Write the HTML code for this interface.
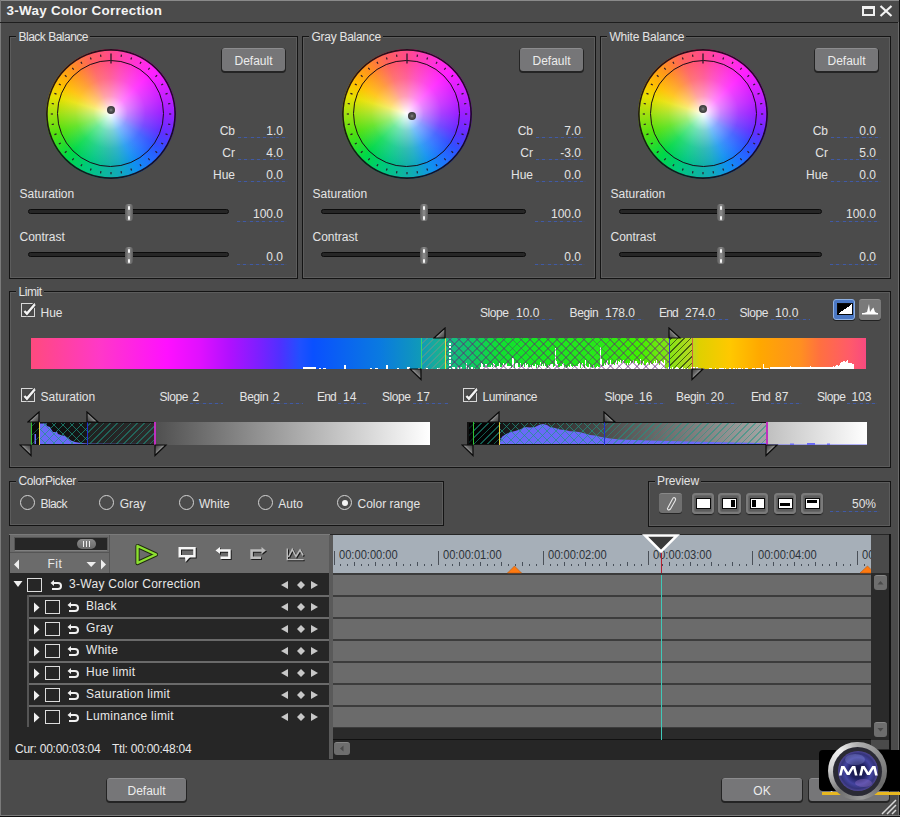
<!DOCTYPE html><html><head><meta charset="utf-8"><style>html,body{margin:0;padding:0;}body{width:900px;height:817px;position:relative;overflow:hidden;background:#4b4b4b;font-family:'Liberation Sans', sans-serif;}</style></head><body>
<div style="position:absolute;left:0px;top:0px;width:900px;height:1px;background:#8a8a8a;"></div>
<div style="position:absolute;left:0px;top:0px;width:1px;height:817px;background:#7a7a7a;"></div>
<div style="position:absolute;left:899px;top:0px;width:1px;height:817px;background:#111;"></div>
<div style="position:absolute;left:898px;top:22px;width:1px;height:793px;background:#6a6a6a;"></div>
<div style="position:absolute;left:0px;top:815px;width:900px;height:1px;background:#7a7a7a;"></div>
<div style="position:absolute;left:0px;top:816px;width:900px;height:1px;background:#111;"></div>
<div style="position:absolute;left:0px;top:22px;width:898px;height:1px;background:#1e1e1e;"></div>
<div style="position:absolute;left:6.5px;top:3.16px;height:13.4px;line-height:13.4px;font:bold 13.4px 'Liberation Sans', sans-serif;color:#f4f4f4;white-space:nowrap;letter-spacing:0.3px;">3-Way Color Correction</div>
<div style="position:absolute;left:862px;top:6px;width:13px;height:10px;box-sizing:border-box;border:2px solid #f0f0f0;border-top-width:3px;"></div>
<svg style="position:absolute;left:879px;top:5px" width="14" height="12"><path d="M1.5 1 L12.5 11 M12.5 1 L1.5 11" stroke="#f4f4f4" stroke-width="2.2"/></svg>
<div style="position:absolute;left:9px;top:36px;width:289px;height:243px;box-sizing:border-box;border:1px solid #141414;"></div>
<div style="position:absolute;left:10px;top:37px;width:287px;height:241px;box-sizing:border-box;border:1px solid #5c5c5c;"></div>
<div style="position:absolute;left:16px;top:30px;width:4px;height:10px;background:#4b4b4b;"></div>
<div style="position:absolute;left:18.5px;top:29.84px;height:12px;line-height:12px;font:normal 12px 'Liberation Sans', sans-serif;color:#e4e4e4;white-space:nowrap;background:#4b4b4b;padding:0 2px 0 1px;margin-left:-1px;letter-spacing:-0.5px;">Black Balance</div>
<div style="position:absolute;left:45.900000000000006px;top:48.5px;width:130px;height:130px;border-radius:50%;background:conic-gradient(#ff4a8a 0deg,#ff40b0 12deg,#ff30e0 30deg,#ff20ff 45deg,#e020ff 60deg,#c020ff 75deg,#9a20ff 90deg,#6030ff 110deg,#3050ff 125deg,#2070ff 140deg,#1090f0 155deg,#10a8c0 170deg,#10b0a8 180deg,#00c880 202deg,#00d848 225deg,#50e010 250deg,#a0e010 270deg,#e8e000 287deg,#ffc000 300deg,#ff9020 320deg,#ff6060 340deg,#ff4a8a 360deg);box-shadow:0 0 0 1.7px rgba(20,5,20,0.9) inset;"></div>
<div style="position:absolute;left:57.400000000000006px;top:60.0px;width:107.0px;height:107.0px;border-radius:50%;box-sizing:border-box;border:1.8px solid #1a0c18;background:radial-gradient(circle closest-side,#fff 0%,rgba(255,255,255,0.85) 9%,rgba(255,255,255,0.45) 33%,rgba(255,255,255,0.14) 67%,rgba(255,255,255,0) 100%),conic-gradient(#ff4a8a 0deg,#ff40b0 12deg,#ff30e0 30deg,#ff20ff 45deg,#e020ff 60deg,#c020ff 75deg,#9a20ff 90deg,#6030ff 110deg,#3050ff 125deg,#2070ff 140deg,#1090f0 155deg,#10a8c0 170deg,#10b0a8 180deg,#00c880 202deg,#00d848 225deg,#50e010 250deg,#a0e010 270deg,#e8e000 287deg,#ffc000 300deg,#ff9020 320deg,#ff6060 340deg,#ff4a8a 360deg);"></div>
<svg style="position:absolute;left:45.900000000000006px;top:48.5px" width="130" height="130"><line x1="65.00" y1="14.50" x2="65.00" y2="4.50" stroke="#2a1a2a" stroke-width="1.3"/><line x1="75.07" y1="7.88" x2="75.45" y2="5.71" stroke="#2a1a2a" stroke-width="1.15"/><line x1="84.84" y1="10.50" x2="85.59" y2="8.43" stroke="#2a1a2a" stroke-width="1.15"/><line x1="94.00" y1="14.77" x2="95.10" y2="12.87" stroke="#2a1a2a" stroke-width="1.15"/><line x1="102.28" y1="20.57" x2="103.70" y2="18.88" stroke="#2a1a2a" stroke-width="1.15"/><line x1="109.43" y1="27.72" x2="111.12" y2="26.30" stroke="#2a1a2a" stroke-width="1.15"/><line x1="115.23" y1="36.00" x2="117.13" y2="34.90" stroke="#2a1a2a" stroke-width="1.15"/><line x1="119.50" y1="45.16" x2="121.57" y2="44.41" stroke="#2a1a2a" stroke-width="1.15"/><line x1="122.12" y1="54.93" x2="124.29" y2="54.55" stroke="#2a1a2a" stroke-width="1.15"/><line x1="123.00" y1="65.00" x2="125.20" y2="65.00" stroke="#2a1a2a" stroke-width="1.15"/><line x1="122.12" y1="75.07" x2="124.29" y2="75.45" stroke="#2a1a2a" stroke-width="1.15"/><line x1="119.50" y1="84.84" x2="121.57" y2="85.59" stroke="#2a1a2a" stroke-width="1.15"/><line x1="115.23" y1="94.00" x2="117.13" y2="95.10" stroke="#2a1a2a" stroke-width="1.15"/><line x1="109.43" y1="102.28" x2="111.12" y2="103.70" stroke="#2a1a2a" stroke-width="1.15"/><line x1="102.28" y1="109.43" x2="103.70" y2="111.12" stroke="#2a1a2a" stroke-width="1.15"/><line x1="94.00" y1="115.23" x2="95.10" y2="117.13" stroke="#2a1a2a" stroke-width="1.15"/><line x1="84.84" y1="119.50" x2="85.59" y2="121.57" stroke="#2a1a2a" stroke-width="1.15"/><line x1="75.07" y1="122.12" x2="75.45" y2="124.29" stroke="#2a1a2a" stroke-width="1.15"/><line x1="65.00" y1="123.00" x2="65.00" y2="125.20" stroke="#2a1a2a" stroke-width="1.15"/><line x1="54.93" y1="122.12" x2="54.55" y2="124.29" stroke="#2a1a2a" stroke-width="1.15"/><line x1="45.16" y1="119.50" x2="44.41" y2="121.57" stroke="#2a1a2a" stroke-width="1.15"/><line x1="36.00" y1="115.23" x2="34.90" y2="117.13" stroke="#2a1a2a" stroke-width="1.15"/><line x1="27.72" y1="109.43" x2="26.30" y2="111.12" stroke="#2a1a2a" stroke-width="1.15"/><line x1="20.57" y1="102.28" x2="18.88" y2="103.70" stroke="#2a1a2a" stroke-width="1.15"/><line x1="14.77" y1="94.00" x2="12.87" y2="95.10" stroke="#2a1a2a" stroke-width="1.15"/><line x1="10.50" y1="84.84" x2="8.43" y2="85.59" stroke="#2a1a2a" stroke-width="1.15"/><line x1="7.88" y1="75.07" x2="5.71" y2="75.45" stroke="#2a1a2a" stroke-width="1.15"/><line x1="7.00" y1="65.00" x2="4.80" y2="65.00" stroke="#2a1a2a" stroke-width="1.15"/><line x1="7.88" y1="54.93" x2="5.71" y2="54.55" stroke="#2a1a2a" stroke-width="1.15"/><line x1="10.50" y1="45.16" x2="8.43" y2="44.41" stroke="#2a1a2a" stroke-width="1.15"/><line x1="14.77" y1="36.00" x2="12.87" y2="34.90" stroke="#2a1a2a" stroke-width="1.15"/><line x1="20.57" y1="27.72" x2="18.88" y2="26.30" stroke="#2a1a2a" stroke-width="1.15"/><line x1="27.72" y1="20.57" x2="26.30" y2="18.88" stroke="#2a1a2a" stroke-width="1.15"/><line x1="36.00" y1="14.77" x2="34.90" y2="12.87" stroke="#2a1a2a" stroke-width="1.15"/><line x1="45.16" y1="10.50" x2="44.41" y2="8.43" stroke="#2a1a2a" stroke-width="1.15"/><line x1="54.93" y1="7.88" x2="54.55" y2="5.71" stroke="#2a1a2a" stroke-width="1.15"/></svg>
<div style="position:absolute;left:107px;top:106.4px;width:8px;height:8px;border-radius:50%;background:radial-gradient(circle at 50% 50%,#888 0,#555 30%,#3a3a3a 70%,#333 100%);"></div>
<div style="position:absolute;left:222px;top:48px;width:63px;height:23px;box-sizing:border-box;border-radius:3px;background:#767678;border-top:1px solid #8c8c8e;box-shadow:0 1px 0 1px #242424;"></div>
<div style="position:absolute;left:222px;top:53.84px;width:63px;height:12px;line-height:12px;font:12px 'Liberation Sans', sans-serif;color:#ececec;text-align:center;white-space:nowrap;">Default</div>
<div style="position:absolute;left:35px;width:200px;text-align:right;top:123.84px;height:12px;line-height:12px;font:12px 'Liberation Sans', sans-serif;color:#e4e4e4;white-space:nowrap;">Cb</div>
<div style="position:absolute;left:83px;width:200px;text-align:right;top:123.84px;height:12px;line-height:12px;font:12px 'Liberation Sans', sans-serif;color:#e4e4e4;white-space:nowrap;">1.0</div>
<div style="position:absolute;left:238px;top:137px;width:50px;height:1px;background:repeating-linear-gradient(90deg,rgba(60,95,195,0.75) 0 3px,rgba(60,95,195,0.12) 3px 6.3px);"></div>
<div style="position:absolute;left:35px;width:200px;text-align:right;top:145.84px;height:12px;line-height:12px;font:12px 'Liberation Sans', sans-serif;color:#e4e4e4;white-space:nowrap;">Cr</div>
<div style="position:absolute;left:83px;width:200px;text-align:right;top:145.84px;height:12px;line-height:12px;font:12px 'Liberation Sans', sans-serif;color:#e4e4e4;white-space:nowrap;">4.0</div>
<div style="position:absolute;left:238px;top:159px;width:50px;height:1px;background:repeating-linear-gradient(90deg,rgba(60,95,195,0.75) 0 3px,rgba(60,95,195,0.12) 3px 6.3px);"></div>
<div style="position:absolute;left:35px;width:200px;text-align:right;top:167.84px;height:12px;line-height:12px;font:12px 'Liberation Sans', sans-serif;color:#e4e4e4;white-space:nowrap;">Hue</div>
<div style="position:absolute;left:83px;width:200px;text-align:right;top:167.84px;height:12px;line-height:12px;font:12px 'Liberation Sans', sans-serif;color:#e4e4e4;white-space:nowrap;">0.0</div>
<div style="position:absolute;left:238px;top:181px;width:50px;height:1px;background:repeating-linear-gradient(90deg,rgba(60,95,195,0.75) 0 3px,rgba(60,95,195,0.12) 3px 6.3px);"></div>
<div style="position:absolute;left:19.5px;top:186.84px;height:12px;line-height:12px;font:normal 12px 'Liberation Sans', sans-serif;color:#e4e4e4;white-space:nowrap;">Saturation</div>
<div style="position:absolute;left:27.5px;top:209.3px;width:201.0px;height:4.8px;box-sizing:border-box;border-radius:2.4px;background:#262626;border:1.3px solid #0c0c0c;"></div>
<div style="position:absolute;left:125px;top:204px;width:7.6px;height:16.5px;border-radius:3px 3px 3.5px 3.5px;background:linear-gradient(90deg,#5a5a5a,#8c8c8c 50%,#5a5a5a);"></div>
<div style="position:absolute;left:128.2px;top:206px;width:1.4px;height:4px;background:#f4f4f4;border-radius:1px;"></div>
<div style="position:absolute;left:128.2px;top:216px;width:1.4px;height:4px;background:#f4f4f4;border-radius:1px;"></div>
<div style="position:absolute;left:83px;width:200px;text-align:right;top:206.84px;height:12px;line-height:12px;font:12px 'Liberation Sans', sans-serif;color:#e4e4e4;white-space:nowrap;">100.0</div>
<div style="position:absolute;left:237px;top:221px;width:50px;height:1px;background:repeating-linear-gradient(90deg,rgba(60,95,195,0.75) 0 3px,rgba(60,95,195,0.12) 3px 6.3px);"></div>
<div style="position:absolute;left:19.5px;top:229.84px;height:12px;line-height:12px;font:normal 12px 'Liberation Sans', sans-serif;color:#e4e4e4;white-space:nowrap;">Contrast</div>
<div style="position:absolute;left:27.5px;top:252.3px;width:201.0px;height:4.8px;box-sizing:border-box;border-radius:2.4px;background:#262626;border:1.3px solid #0c0c0c;"></div>
<div style="position:absolute;left:125px;top:247px;width:7.6px;height:16.5px;border-radius:3px 3px 3.5px 3.5px;background:linear-gradient(90deg,#5a5a5a,#8c8c8c 50%,#5a5a5a);"></div>
<div style="position:absolute;left:128.2px;top:249px;width:1.4px;height:4px;background:#f4f4f4;border-radius:1px;"></div>
<div style="position:absolute;left:128.2px;top:259px;width:1.4px;height:4px;background:#f4f4f4;border-radius:1px;"></div>
<div style="position:absolute;left:83px;width:200px;text-align:right;top:249.84px;height:12px;line-height:12px;font:12px 'Liberation Sans', sans-serif;color:#e4e4e4;white-space:nowrap;">0.0</div>
<div style="position:absolute;left:237px;top:264px;width:50px;height:1px;background:repeating-linear-gradient(90deg,rgba(60,95,195,0.75) 0 3px,rgba(60,95,195,0.12) 3px 6.3px);"></div>
<div style="position:absolute;left:302px;top:36px;width:294px;height:243px;box-sizing:border-box;border:1px solid #141414;"></div>
<div style="position:absolute;left:303px;top:37px;width:292px;height:241px;box-sizing:border-box;border:1px solid #5c5c5c;"></div>
<div style="position:absolute;left:309px;top:30px;width:4px;height:10px;background:#4b4b4b;"></div>
<div style="position:absolute;left:311.5px;top:29.84px;height:12px;line-height:12px;font:normal 12px 'Liberation Sans', sans-serif;color:#e4e4e4;white-space:nowrap;background:#4b4b4b;padding:0 2px 0 1px;margin-left:-1px;letter-spacing:-0.28px;">Gray Balance</div>
<div style="position:absolute;left:341.6px;top:48.5px;width:130px;height:130px;border-radius:50%;background:conic-gradient(#ff4a8a 0deg,#ff40b0 12deg,#ff30e0 30deg,#ff20ff 45deg,#e020ff 60deg,#c020ff 75deg,#9a20ff 90deg,#6030ff 110deg,#3050ff 125deg,#2070ff 140deg,#1090f0 155deg,#10a8c0 170deg,#10b0a8 180deg,#00c880 202deg,#00d848 225deg,#50e010 250deg,#a0e010 270deg,#e8e000 287deg,#ffc000 300deg,#ff9020 320deg,#ff6060 340deg,#ff4a8a 360deg);box-shadow:0 0 0 1.7px rgba(20,5,20,0.9) inset;"></div>
<div style="position:absolute;left:353.1px;top:60.0px;width:107.0px;height:107.0px;border-radius:50%;box-sizing:border-box;border:1.8px solid #1a0c18;background:radial-gradient(circle closest-side,#fff 0%,rgba(255,255,255,0.85) 9%,rgba(255,255,255,0.45) 33%,rgba(255,255,255,0.14) 67%,rgba(255,255,255,0) 100%),conic-gradient(#ff4a8a 0deg,#ff40b0 12deg,#ff30e0 30deg,#ff20ff 45deg,#e020ff 60deg,#c020ff 75deg,#9a20ff 90deg,#6030ff 110deg,#3050ff 125deg,#2070ff 140deg,#1090f0 155deg,#10a8c0 170deg,#10b0a8 180deg,#00c880 202deg,#00d848 225deg,#50e010 250deg,#a0e010 270deg,#e8e000 287deg,#ffc000 300deg,#ff9020 320deg,#ff6060 340deg,#ff4a8a 360deg);"></div>
<svg style="position:absolute;left:341.6px;top:48.5px" width="130" height="130"><line x1="65.00" y1="14.50" x2="65.00" y2="4.50" stroke="#2a1a2a" stroke-width="1.3"/><line x1="75.07" y1="7.88" x2="75.45" y2="5.71" stroke="#2a1a2a" stroke-width="1.15"/><line x1="84.84" y1="10.50" x2="85.59" y2="8.43" stroke="#2a1a2a" stroke-width="1.15"/><line x1="94.00" y1="14.77" x2="95.10" y2="12.87" stroke="#2a1a2a" stroke-width="1.15"/><line x1="102.28" y1="20.57" x2="103.70" y2="18.88" stroke="#2a1a2a" stroke-width="1.15"/><line x1="109.43" y1="27.72" x2="111.12" y2="26.30" stroke="#2a1a2a" stroke-width="1.15"/><line x1="115.23" y1="36.00" x2="117.13" y2="34.90" stroke="#2a1a2a" stroke-width="1.15"/><line x1="119.50" y1="45.16" x2="121.57" y2="44.41" stroke="#2a1a2a" stroke-width="1.15"/><line x1="122.12" y1="54.93" x2="124.29" y2="54.55" stroke="#2a1a2a" stroke-width="1.15"/><line x1="123.00" y1="65.00" x2="125.20" y2="65.00" stroke="#2a1a2a" stroke-width="1.15"/><line x1="122.12" y1="75.07" x2="124.29" y2="75.45" stroke="#2a1a2a" stroke-width="1.15"/><line x1="119.50" y1="84.84" x2="121.57" y2="85.59" stroke="#2a1a2a" stroke-width="1.15"/><line x1="115.23" y1="94.00" x2="117.13" y2="95.10" stroke="#2a1a2a" stroke-width="1.15"/><line x1="109.43" y1="102.28" x2="111.12" y2="103.70" stroke="#2a1a2a" stroke-width="1.15"/><line x1="102.28" y1="109.43" x2="103.70" y2="111.12" stroke="#2a1a2a" stroke-width="1.15"/><line x1="94.00" y1="115.23" x2="95.10" y2="117.13" stroke="#2a1a2a" stroke-width="1.15"/><line x1="84.84" y1="119.50" x2="85.59" y2="121.57" stroke="#2a1a2a" stroke-width="1.15"/><line x1="75.07" y1="122.12" x2="75.45" y2="124.29" stroke="#2a1a2a" stroke-width="1.15"/><line x1="65.00" y1="123.00" x2="65.00" y2="125.20" stroke="#2a1a2a" stroke-width="1.15"/><line x1="54.93" y1="122.12" x2="54.55" y2="124.29" stroke="#2a1a2a" stroke-width="1.15"/><line x1="45.16" y1="119.50" x2="44.41" y2="121.57" stroke="#2a1a2a" stroke-width="1.15"/><line x1="36.00" y1="115.23" x2="34.90" y2="117.13" stroke="#2a1a2a" stroke-width="1.15"/><line x1="27.72" y1="109.43" x2="26.30" y2="111.12" stroke="#2a1a2a" stroke-width="1.15"/><line x1="20.57" y1="102.28" x2="18.88" y2="103.70" stroke="#2a1a2a" stroke-width="1.15"/><line x1="14.77" y1="94.00" x2="12.87" y2="95.10" stroke="#2a1a2a" stroke-width="1.15"/><line x1="10.50" y1="84.84" x2="8.43" y2="85.59" stroke="#2a1a2a" stroke-width="1.15"/><line x1="7.88" y1="75.07" x2="5.71" y2="75.45" stroke="#2a1a2a" stroke-width="1.15"/><line x1="7.00" y1="65.00" x2="4.80" y2="65.00" stroke="#2a1a2a" stroke-width="1.15"/><line x1="7.88" y1="54.93" x2="5.71" y2="54.55" stroke="#2a1a2a" stroke-width="1.15"/><line x1="10.50" y1="45.16" x2="8.43" y2="44.41" stroke="#2a1a2a" stroke-width="1.15"/><line x1="14.77" y1="36.00" x2="12.87" y2="34.90" stroke="#2a1a2a" stroke-width="1.15"/><line x1="20.57" y1="27.72" x2="18.88" y2="26.30" stroke="#2a1a2a" stroke-width="1.15"/><line x1="27.72" y1="20.57" x2="26.30" y2="18.88" stroke="#2a1a2a" stroke-width="1.15"/><line x1="36.00" y1="14.77" x2="34.90" y2="12.87" stroke="#2a1a2a" stroke-width="1.15"/><line x1="45.16" y1="10.50" x2="44.41" y2="8.43" stroke="#2a1a2a" stroke-width="1.15"/><line x1="54.93" y1="7.88" x2="54.55" y2="5.71" stroke="#2a1a2a" stroke-width="1.15"/></svg>
<div style="position:absolute;left:407.7px;top:112.2px;width:8px;height:8px;border-radius:50%;background:radial-gradient(circle at 50% 50%,#888 0,#555 30%,#3a3a3a 70%,#333 100%);"></div>
<div style="position:absolute;left:520px;top:48px;width:63px;height:23px;box-sizing:border-box;border-radius:3px;background:#767678;border-top:1px solid #8c8c8e;box-shadow:0 1px 0 1px #242424;"></div>
<div style="position:absolute;left:520px;top:53.84px;width:63px;height:12px;line-height:12px;font:12px 'Liberation Sans', sans-serif;color:#ececec;text-align:center;white-space:nowrap;">Default</div>
<div style="position:absolute;left:333px;width:200px;text-align:right;top:123.84px;height:12px;line-height:12px;font:12px 'Liberation Sans', sans-serif;color:#e4e4e4;white-space:nowrap;">Cb</div>
<div style="position:absolute;left:381px;width:200px;text-align:right;top:123.84px;height:12px;line-height:12px;font:12px 'Liberation Sans', sans-serif;color:#e4e4e4;white-space:nowrap;">7.0</div>
<div style="position:absolute;left:536px;top:137px;width:50px;height:1px;background:repeating-linear-gradient(90deg,rgba(60,95,195,0.75) 0 3px,rgba(60,95,195,0.12) 3px 6.3px);"></div>
<div style="position:absolute;left:333px;width:200px;text-align:right;top:145.84px;height:12px;line-height:12px;font:12px 'Liberation Sans', sans-serif;color:#e4e4e4;white-space:nowrap;">Cr</div>
<div style="position:absolute;left:381px;width:200px;text-align:right;top:145.84px;height:12px;line-height:12px;font:12px 'Liberation Sans', sans-serif;color:#e4e4e4;white-space:nowrap;">-3.0</div>
<div style="position:absolute;left:536px;top:159px;width:50px;height:1px;background:repeating-linear-gradient(90deg,rgba(60,95,195,0.75) 0 3px,rgba(60,95,195,0.12) 3px 6.3px);"></div>
<div style="position:absolute;left:333px;width:200px;text-align:right;top:167.84px;height:12px;line-height:12px;font:12px 'Liberation Sans', sans-serif;color:#e4e4e4;white-space:nowrap;">Hue</div>
<div style="position:absolute;left:381px;width:200px;text-align:right;top:167.84px;height:12px;line-height:12px;font:12px 'Liberation Sans', sans-serif;color:#e4e4e4;white-space:nowrap;">0.0</div>
<div style="position:absolute;left:536px;top:181px;width:50px;height:1px;background:repeating-linear-gradient(90deg,rgba(60,95,195,0.75) 0 3px,rgba(60,95,195,0.12) 3px 6.3px);"></div>
<div style="position:absolute;left:312.5px;top:186.84px;height:12px;line-height:12px;font:normal 12px 'Liberation Sans', sans-serif;color:#e4e4e4;white-space:nowrap;">Saturation</div>
<div style="position:absolute;left:321px;top:209.3px;width:205px;height:4.8px;box-sizing:border-box;border-radius:2.4px;background:#262626;border:1.3px solid #0c0c0c;"></div>
<div style="position:absolute;left:420px;top:204px;width:7.6px;height:16.5px;border-radius:3px 3px 3.5px 3.5px;background:linear-gradient(90deg,#5a5a5a,#8c8c8c 50%,#5a5a5a);"></div>
<div style="position:absolute;left:423.2px;top:206px;width:1.4px;height:4px;background:#f4f4f4;border-radius:1px;"></div>
<div style="position:absolute;left:423.2px;top:216px;width:1.4px;height:4px;background:#f4f4f4;border-radius:1px;"></div>
<div style="position:absolute;left:381px;width:200px;text-align:right;top:206.84px;height:12px;line-height:12px;font:12px 'Liberation Sans', sans-serif;color:#e4e4e4;white-space:nowrap;">100.0</div>
<div style="position:absolute;left:535px;top:221px;width:50px;height:1px;background:repeating-linear-gradient(90deg,rgba(60,95,195,0.75) 0 3px,rgba(60,95,195,0.12) 3px 6.3px);"></div>
<div style="position:absolute;left:312.5px;top:229.84px;height:12px;line-height:12px;font:normal 12px 'Liberation Sans', sans-serif;color:#e4e4e4;white-space:nowrap;">Contrast</div>
<div style="position:absolute;left:321px;top:252.3px;width:205px;height:4.8px;box-sizing:border-box;border-radius:2.4px;background:#262626;border:1.3px solid #0c0c0c;"></div>
<div style="position:absolute;left:420px;top:247px;width:7.6px;height:16.5px;border-radius:3px 3px 3.5px 3.5px;background:linear-gradient(90deg,#5a5a5a,#8c8c8c 50%,#5a5a5a);"></div>
<div style="position:absolute;left:423.2px;top:249px;width:1.4px;height:4px;background:#f4f4f4;border-radius:1px;"></div>
<div style="position:absolute;left:423.2px;top:259px;width:1.4px;height:4px;background:#f4f4f4;border-radius:1px;"></div>
<div style="position:absolute;left:381px;width:200px;text-align:right;top:249.84px;height:12px;line-height:12px;font:12px 'Liberation Sans', sans-serif;color:#e4e4e4;white-space:nowrap;">0.0</div>
<div style="position:absolute;left:535px;top:264px;width:50px;height:1px;background:repeating-linear-gradient(90deg,rgba(60,95,195,0.75) 0 3px,rgba(60,95,195,0.12) 3px 6.3px);"></div>
<div style="position:absolute;left:600px;top:36px;width:291px;height:243px;box-sizing:border-box;border:1px solid #141414;"></div>
<div style="position:absolute;left:601px;top:37px;width:289px;height:241px;box-sizing:border-box;border:1px solid #5c5c5c;"></div>
<div style="position:absolute;left:607px;top:30px;width:4px;height:10px;background:#4b4b4b;"></div>
<div style="position:absolute;left:609.5px;top:29.84px;height:12px;line-height:12px;font:normal 12px 'Liberation Sans', sans-serif;color:#e4e4e4;white-space:nowrap;background:#4b4b4b;padding:0 2px 0 1px;margin-left:-1px;letter-spacing:-0.21px;">White Balance</div>
<div style="position:absolute;left:638.2px;top:48.5px;width:130px;height:130px;border-radius:50%;background:conic-gradient(#ff4a8a 0deg,#ff40b0 12deg,#ff30e0 30deg,#ff20ff 45deg,#e020ff 60deg,#c020ff 75deg,#9a20ff 90deg,#6030ff 110deg,#3050ff 125deg,#2070ff 140deg,#1090f0 155deg,#10a8c0 170deg,#10b0a8 180deg,#00c880 202deg,#00d848 225deg,#50e010 250deg,#a0e010 270deg,#e8e000 287deg,#ffc000 300deg,#ff9020 320deg,#ff6060 340deg,#ff4a8a 360deg);box-shadow:0 0 0 1.7px rgba(20,5,20,0.9) inset;"></div>
<div style="position:absolute;left:649.7px;top:60.0px;width:107.0px;height:107.0px;border-radius:50%;box-sizing:border-box;border:1.8px solid #1a0c18;background:radial-gradient(circle closest-side,#fff 0%,rgba(255,255,255,0.85) 9%,rgba(255,255,255,0.45) 33%,rgba(255,255,255,0.14) 67%,rgba(255,255,255,0) 100%),conic-gradient(#ff4a8a 0deg,#ff40b0 12deg,#ff30e0 30deg,#ff20ff 45deg,#e020ff 60deg,#c020ff 75deg,#9a20ff 90deg,#6030ff 110deg,#3050ff 125deg,#2070ff 140deg,#1090f0 155deg,#10a8c0 170deg,#10b0a8 180deg,#00c880 202deg,#00d848 225deg,#50e010 250deg,#a0e010 270deg,#e8e000 287deg,#ffc000 300deg,#ff9020 320deg,#ff6060 340deg,#ff4a8a 360deg);"></div>
<svg style="position:absolute;left:638.2px;top:48.5px" width="130" height="130"><line x1="65.00" y1="14.50" x2="65.00" y2="4.50" stroke="#2a1a2a" stroke-width="1.3"/><line x1="75.07" y1="7.88" x2="75.45" y2="5.71" stroke="#2a1a2a" stroke-width="1.15"/><line x1="84.84" y1="10.50" x2="85.59" y2="8.43" stroke="#2a1a2a" stroke-width="1.15"/><line x1="94.00" y1="14.77" x2="95.10" y2="12.87" stroke="#2a1a2a" stroke-width="1.15"/><line x1="102.28" y1="20.57" x2="103.70" y2="18.88" stroke="#2a1a2a" stroke-width="1.15"/><line x1="109.43" y1="27.72" x2="111.12" y2="26.30" stroke="#2a1a2a" stroke-width="1.15"/><line x1="115.23" y1="36.00" x2="117.13" y2="34.90" stroke="#2a1a2a" stroke-width="1.15"/><line x1="119.50" y1="45.16" x2="121.57" y2="44.41" stroke="#2a1a2a" stroke-width="1.15"/><line x1="122.12" y1="54.93" x2="124.29" y2="54.55" stroke="#2a1a2a" stroke-width="1.15"/><line x1="123.00" y1="65.00" x2="125.20" y2="65.00" stroke="#2a1a2a" stroke-width="1.15"/><line x1="122.12" y1="75.07" x2="124.29" y2="75.45" stroke="#2a1a2a" stroke-width="1.15"/><line x1="119.50" y1="84.84" x2="121.57" y2="85.59" stroke="#2a1a2a" stroke-width="1.15"/><line x1="115.23" y1="94.00" x2="117.13" y2="95.10" stroke="#2a1a2a" stroke-width="1.15"/><line x1="109.43" y1="102.28" x2="111.12" y2="103.70" stroke="#2a1a2a" stroke-width="1.15"/><line x1="102.28" y1="109.43" x2="103.70" y2="111.12" stroke="#2a1a2a" stroke-width="1.15"/><line x1="94.00" y1="115.23" x2="95.10" y2="117.13" stroke="#2a1a2a" stroke-width="1.15"/><line x1="84.84" y1="119.50" x2="85.59" y2="121.57" stroke="#2a1a2a" stroke-width="1.15"/><line x1="75.07" y1="122.12" x2="75.45" y2="124.29" stroke="#2a1a2a" stroke-width="1.15"/><line x1="65.00" y1="123.00" x2="65.00" y2="125.20" stroke="#2a1a2a" stroke-width="1.15"/><line x1="54.93" y1="122.12" x2="54.55" y2="124.29" stroke="#2a1a2a" stroke-width="1.15"/><line x1="45.16" y1="119.50" x2="44.41" y2="121.57" stroke="#2a1a2a" stroke-width="1.15"/><line x1="36.00" y1="115.23" x2="34.90" y2="117.13" stroke="#2a1a2a" stroke-width="1.15"/><line x1="27.72" y1="109.43" x2="26.30" y2="111.12" stroke="#2a1a2a" stroke-width="1.15"/><line x1="20.57" y1="102.28" x2="18.88" y2="103.70" stroke="#2a1a2a" stroke-width="1.15"/><line x1="14.77" y1="94.00" x2="12.87" y2="95.10" stroke="#2a1a2a" stroke-width="1.15"/><line x1="10.50" y1="84.84" x2="8.43" y2="85.59" stroke="#2a1a2a" stroke-width="1.15"/><line x1="7.88" y1="75.07" x2="5.71" y2="75.45" stroke="#2a1a2a" stroke-width="1.15"/><line x1="7.00" y1="65.00" x2="4.80" y2="65.00" stroke="#2a1a2a" stroke-width="1.15"/><line x1="7.88" y1="54.93" x2="5.71" y2="54.55" stroke="#2a1a2a" stroke-width="1.15"/><line x1="10.50" y1="45.16" x2="8.43" y2="44.41" stroke="#2a1a2a" stroke-width="1.15"/><line x1="14.77" y1="36.00" x2="12.87" y2="34.90" stroke="#2a1a2a" stroke-width="1.15"/><line x1="20.57" y1="27.72" x2="18.88" y2="26.30" stroke="#2a1a2a" stroke-width="1.15"/><line x1="27.72" y1="20.57" x2="26.30" y2="18.88" stroke="#2a1a2a" stroke-width="1.15"/><line x1="36.00" y1="14.77" x2="34.90" y2="12.87" stroke="#2a1a2a" stroke-width="1.15"/><line x1="45.16" y1="10.50" x2="44.41" y2="8.43" stroke="#2a1a2a" stroke-width="1.15"/><line x1="54.93" y1="7.88" x2="54.55" y2="5.71" stroke="#2a1a2a" stroke-width="1.15"/></svg>
<div style="position:absolute;left:699.1px;top:105.4px;width:8px;height:8px;border-radius:50%;background:radial-gradient(circle at 50% 50%,#888 0,#555 30%,#3a3a3a 70%,#333 100%);"></div>
<div style="position:absolute;left:815px;top:48px;width:63px;height:23px;box-sizing:border-box;border-radius:3px;background:#767678;border-top:1px solid #8c8c8e;box-shadow:0 1px 0 1px #242424;"></div>
<div style="position:absolute;left:815px;top:53.84px;width:63px;height:12px;line-height:12px;font:12px 'Liberation Sans', sans-serif;color:#ececec;text-align:center;white-space:nowrap;">Default</div>
<div style="position:absolute;left:628px;width:200px;text-align:right;top:123.84px;height:12px;line-height:12px;font:12px 'Liberation Sans', sans-serif;color:#e4e4e4;white-space:nowrap;">Cb</div>
<div style="position:absolute;left:676px;width:200px;text-align:right;top:123.84px;height:12px;line-height:12px;font:12px 'Liberation Sans', sans-serif;color:#e4e4e4;white-space:nowrap;">0.0</div>
<div style="position:absolute;left:831px;top:137px;width:50px;height:1px;background:repeating-linear-gradient(90deg,rgba(60,95,195,0.75) 0 3px,rgba(60,95,195,0.12) 3px 6.3px);"></div>
<div style="position:absolute;left:628px;width:200px;text-align:right;top:145.84px;height:12px;line-height:12px;font:12px 'Liberation Sans', sans-serif;color:#e4e4e4;white-space:nowrap;">Cr</div>
<div style="position:absolute;left:676px;width:200px;text-align:right;top:145.84px;height:12px;line-height:12px;font:12px 'Liberation Sans', sans-serif;color:#e4e4e4;white-space:nowrap;">5.0</div>
<div style="position:absolute;left:831px;top:159px;width:50px;height:1px;background:repeating-linear-gradient(90deg,rgba(60,95,195,0.75) 0 3px,rgba(60,95,195,0.12) 3px 6.3px);"></div>
<div style="position:absolute;left:628px;width:200px;text-align:right;top:167.84px;height:12px;line-height:12px;font:12px 'Liberation Sans', sans-serif;color:#e4e4e4;white-space:nowrap;">Hue</div>
<div style="position:absolute;left:676px;width:200px;text-align:right;top:167.84px;height:12px;line-height:12px;font:12px 'Liberation Sans', sans-serif;color:#e4e4e4;white-space:nowrap;">0.0</div>
<div style="position:absolute;left:831px;top:181px;width:50px;height:1px;background:repeating-linear-gradient(90deg,rgba(60,95,195,0.75) 0 3px,rgba(60,95,195,0.12) 3px 6.3px);"></div>
<div style="position:absolute;left:610.5px;top:186.84px;height:12px;line-height:12px;font:normal 12px 'Liberation Sans', sans-serif;color:#e4e4e4;white-space:nowrap;">Saturation</div>
<div style="position:absolute;left:619px;top:209.3px;width:203px;height:4.8px;box-sizing:border-box;border-radius:2.4px;background:#262626;border:1.3px solid #0c0c0c;"></div>
<div style="position:absolute;left:717px;top:204px;width:7.6px;height:16.5px;border-radius:3px 3px 3.5px 3.5px;background:linear-gradient(90deg,#5a5a5a,#8c8c8c 50%,#5a5a5a);"></div>
<div style="position:absolute;left:720.2px;top:206px;width:1.4px;height:4px;background:#f4f4f4;border-radius:1px;"></div>
<div style="position:absolute;left:720.2px;top:216px;width:1.4px;height:4px;background:#f4f4f4;border-radius:1px;"></div>
<div style="position:absolute;left:676px;width:200px;text-align:right;top:206.84px;height:12px;line-height:12px;font:12px 'Liberation Sans', sans-serif;color:#e4e4e4;white-space:nowrap;">100.0</div>
<div style="position:absolute;left:830px;top:221px;width:50px;height:1px;background:repeating-linear-gradient(90deg,rgba(60,95,195,0.75) 0 3px,rgba(60,95,195,0.12) 3px 6.3px);"></div>
<div style="position:absolute;left:610.5px;top:229.84px;height:12px;line-height:12px;font:normal 12px 'Liberation Sans', sans-serif;color:#e4e4e4;white-space:nowrap;">Contrast</div>
<div style="position:absolute;left:619px;top:252.3px;width:203px;height:4.8px;box-sizing:border-box;border-radius:2.4px;background:#262626;border:1.3px solid #0c0c0c;"></div>
<div style="position:absolute;left:717px;top:247px;width:7.6px;height:16.5px;border-radius:3px 3px 3.5px 3.5px;background:linear-gradient(90deg,#5a5a5a,#8c8c8c 50%,#5a5a5a);"></div>
<div style="position:absolute;left:720.2px;top:249px;width:1.4px;height:4px;background:#f4f4f4;border-radius:1px;"></div>
<div style="position:absolute;left:720.2px;top:259px;width:1.4px;height:4px;background:#f4f4f4;border-radius:1px;"></div>
<div style="position:absolute;left:676px;width:200px;text-align:right;top:249.84px;height:12px;line-height:12px;font:12px 'Liberation Sans', sans-serif;color:#e4e4e4;white-space:nowrap;">0.0</div>
<div style="position:absolute;left:830px;top:264px;width:50px;height:1px;background:repeating-linear-gradient(90deg,rgba(60,95,195,0.75) 0 3px,rgba(60,95,195,0.12) 3px 6.3px);"></div>
<div style="position:absolute;left:9px;top:291px;width:882px;height:177px;box-sizing:border-box;border:1px solid #141414;"></div>
<div style="position:absolute;left:10px;top:292px;width:880px;height:175px;box-sizing:border-box;border:1px solid #5c5c5c;"></div>
<div style="position:absolute;left:16px;top:285px;width:4px;height:10px;background:#4b4b4b;"></div>
<div style="position:absolute;left:18.5px;top:284.84px;height:12px;line-height:12px;font:normal 12px 'Liberation Sans', sans-serif;color:#e4e4e4;white-space:nowrap;background:#4b4b4b;padding:0 2px;margin-left:-2px;letter-spacing:-0.46px;">Limit</div>
<div style="position:absolute;left:21px;top:303px;width:14px;height:14px;box-sizing:border-box;border:1.5px solid #d8d8d8;"></div>
<svg style="position:absolute;left:21px;top:302px" width="17" height="16"><path d="M3.4 9 L5.9 11.6 L13.9 2.2" fill="none" stroke="#3a3a3a" stroke-width="4.2"/><path d="M3.4 9 L5.9 11.6 L13.9 2.2" fill="none" stroke="#f4f4f4" stroke-width="2.4"/></svg>
<div style="position:absolute;left:40.5px;top:305.84px;height:12px;line-height:12px;font:normal 12px 'Liberation Sans', sans-serif;color:#e4e4e4;white-space:nowrap;">Hue</div>
<div style="position:absolute;left:480px;top:305.84px;height:12px;line-height:12px;font:normal 12px 'Liberation Sans', sans-serif;color:#e4e4e4;white-space:nowrap;letter-spacing:-0.45px;">Slope</div>
<div style="position:absolute;left:516px;top:305.84px;height:12px;line-height:12px;font:normal 12px 'Liberation Sans', sans-serif;color:#e4e4e4;white-space:nowrap;">10.0</div>
<div style="position:absolute;left:511px;top:319px;width:44px;height:1px;background:repeating-linear-gradient(90deg,rgba(60,95,195,0.75) 0 3px,rgba(60,95,195,0.12) 3px 6.3px);"></div>
<div style="position:absolute;left:569.5px;top:305.84px;height:12px;line-height:12px;font:normal 12px 'Liberation Sans', sans-serif;color:#e4e4e4;white-space:nowrap;letter-spacing:-0.36px;">Begin</div>
<div style="position:absolute;left:605px;top:305.84px;height:12px;line-height:12px;font:normal 12px 'Liberation Sans', sans-serif;color:#e4e4e4;white-space:nowrap;">178.0</div>
<div style="position:absolute;left:600px;top:319px;width:44px;height:1px;background:repeating-linear-gradient(90deg,rgba(60,95,195,0.75) 0 3px,rgba(60,95,195,0.12) 3px 6.3px);"></div>
<div style="position:absolute;left:659px;top:305.84px;height:12px;line-height:12px;font:normal 12px 'Liberation Sans', sans-serif;color:#e4e4e4;white-space:nowrap;letter-spacing:-0.8px;">End</div>
<div style="position:absolute;left:685px;top:305.84px;height:12px;line-height:12px;font:normal 12px 'Liberation Sans', sans-serif;color:#e4e4e4;white-space:nowrap;">274.0</div>
<div style="position:absolute;left:680.5px;top:319px;width:48.5px;height:1px;background:repeating-linear-gradient(90deg,rgba(60,95,195,0.75) 0 3px,rgba(60,95,195,0.12) 3px 6.3px);"></div>
<div style="position:absolute;left:739.5px;top:305.84px;height:12px;line-height:12px;font:normal 12px 'Liberation Sans', sans-serif;color:#e4e4e4;white-space:nowrap;letter-spacing:-0.45px;">Slope</div>
<div style="position:absolute;left:775px;top:305.84px;height:12px;line-height:12px;font:normal 12px 'Liberation Sans', sans-serif;color:#e4e4e4;white-space:nowrap;">10.0</div>
<div style="position:absolute;left:770.5px;top:319px;width:39.5px;height:1px;background:repeating-linear-gradient(90deg,rgba(60,95,195,0.75) 0 3px,rgba(60,95,195,0.12) 3px 6.3px);"></div>
<div style="position:absolute;left:833px;top:299px;width:22px;height:21px;box-sizing:border-box;border-radius:3px;background:#4b78c4;border:1px solid #8fb0e0;box-shadow:0 1px 0 #222;"></div>
<div style="position:absolute;left:836.7px;top:302.8px;width:16px;height:12.2px;box-sizing:border-box;border:1.5px solid #0a0a0a;background:linear-gradient(to bottom right,#000 50%,#fff 50%);"></div>
<div style="position:absolute;left:859px;top:299px;width:22px;height:21px;box-sizing:border-box;border-radius:3px;background:#7a7a7a;border-top:1px solid #8a8a8a;box-shadow:0 1px 0 #222;"></div>
<svg style="position:absolute;left:859px;top:299px" width="22" height="21"><path d="M3.5 14.5 L8 13 L10 5 L11 13 L13 10 L14.5 8.5 L16 13 L19 14.5 Z" fill="#fff"/><rect x="3" y="14" width="16" height="1.5" fill="#fff"/></svg>
<div style="position:absolute;left:31px;top:338px;width:835px;height:31px;background:linear-gradient(90deg,#ff4a7e 0.00%,#ff38c8 8.26%,#ff10ff 16.29%,#e010ff 20.24%,#b010ff 23.83%,#7a20ff 27.43%,#5030ff 29.82%,#2050ff 32.22%,#0a50ff 33.77%,#0a7ae0 41.80%,#109ab8 46.71%,#18b888 49.58%,#10c868 52.57%,#10e030 56.17%,#18e820 60.96%,#28e818 68.14%,#40f000 72.93%,#70e810 75.33%,#b8d820 79.16%,#e0d000 80.12%,#ffc800 83.71%,#ffa800 87.31%,#ff9020 92.10%,#ff7040 94.49%,#ff5a6a 98.08%,#f84a80 100.00%);"></div>
<svg style="position:absolute;left:31px;top:338px" width="835" height="31"><g fill="#fff"><rect x="272" y="29" width="13" height="2"/><rect x="288" y="30" width="2" height="1"/><rect x="292" y="30" width="3" height="1"/><rect x="313" y="27" width="2" height="4"/><rect x="339" y="30" width="2" height="1"/><rect x="344" y="30" width="3" height="1"/><rect x="355" y="27" width="2" height="4"/><rect x="366" y="30" width="2" height="1"/><rect x="376" y="29" width="3" height="2"/><rect x="387" y="30" width="2" height="1"/><rect x="395" y="30" width="2" height="1"/><rect x="406" y="30" width="3" height="1"/><rect x="421" y="29" width="1" height="2"/><rect x="422" y="29" width="1" height="2"/><rect x="423" y="29" width="1" height="2"/><rect x="426" y="29" width="1" height="2"/><rect x="427" y="29" width="1" height="2"/><rect x="429" y="29" width="1" height="2"/><rect x="430" y="29" width="1" height="2"/><rect x="435" y="29" width="1" height="2"/><rect x="437" y="29" width="1" height="2"/><rect x="440" y="29" width="1" height="2"/><rect x="441" y="29" width="1" height="2"/><rect x="443" y="30" width="1" height="1"/><rect x="449" y="29" width="1" height="2"/><rect x="450" y="25" width="1" height="6"/><rect x="451" y="26" width="1" height="5"/><rect x="452" y="29" width="1" height="2"/><rect x="453" y="29" width="1" height="2"/><rect x="454" y="26" width="1" height="5"/><rect x="455" y="26" width="1" height="5"/><rect x="456" y="29" width="1" height="2"/><rect x="457" y="29" width="1" height="2"/><rect x="458" y="29" width="1" height="2"/><rect x="459" y="29" width="1" height="2"/><rect x="460" y="27" width="1" height="4"/><rect x="461" y="29" width="1" height="2"/><rect x="462" y="25" width="1" height="6"/><rect x="463" y="26" width="1" height="5"/><rect x="464" y="29" width="1" height="2"/><rect x="465" y="29" width="1" height="2"/><rect x="466" y="28" width="1" height="3"/><rect x="467" y="28" width="1" height="3"/><rect x="468" y="25" width="1" height="6"/><rect x="469" y="29" width="1" height="2"/><rect x="470" y="29" width="1" height="2"/><rect x="471" y="27" width="1" height="4"/><rect x="472" y="25" width="1" height="6"/><rect x="473" y="27" width="1" height="4"/><rect x="474" y="26" width="1" height="5"/><rect x="475" y="25" width="1" height="6"/><rect x="476" y="28" width="1" height="3"/><rect x="477" y="28" width="1" height="3"/><rect x="478" y="28" width="1" height="3"/><rect x="479" y="28" width="1" height="3"/><rect x="480" y="30" width="1" height="1"/><rect x="481" y="26" width="1" height="5"/><rect x="482" y="26" width="1" height="5"/><rect x="483" y="30" width="1" height="1"/><rect x="484" y="25" width="1" height="6"/><rect x="485" y="25" width="1" height="6"/><rect x="486" y="25" width="1" height="6"/><rect x="487" y="29" width="1" height="2"/><rect x="488" y="29" width="1" height="2"/><rect x="489" y="26" width="1" height="5"/><rect x="490" y="29" width="1" height="2"/><rect x="491" y="28" width="1" height="3"/><rect x="492" y="26" width="1" height="5"/><rect x="493" y="29" width="1" height="2"/><rect x="494" y="25" width="1" height="6"/><rect x="495" y="27" width="1" height="4"/><rect x="496" y="26" width="1" height="5"/><rect x="497" y="29" width="1" height="2"/><rect x="498" y="29" width="1" height="2"/><rect x="499" y="27" width="1" height="4"/><rect x="500" y="29" width="1" height="2"/><rect x="501" y="27" width="1" height="4"/><rect x="502" y="28" width="1" height="3"/><rect x="503" y="28" width="1" height="3"/><rect x="504" y="26" width="1" height="5"/><rect x="505" y="30" width="1" height="1"/><rect x="506" y="27" width="1" height="4"/><rect x="507" y="29" width="1" height="2"/><rect x="508" y="27" width="1" height="4"/><rect x="509" y="28" width="1" height="3"/><rect x="510" y="28" width="1" height="3"/><rect x="511" y="26" width="1" height="5"/><rect x="512" y="28" width="1" height="3"/><rect x="513" y="25" width="1" height="6"/><rect x="514" y="28" width="1" height="3"/><rect x="515" y="29" width="1" height="2"/><rect x="516" y="30" width="1" height="1"/><rect x="517" y="27" width="1" height="4"/><rect x="518" y="28" width="1" height="3"/><rect x="519" y="26" width="1" height="5"/><rect x="520" y="26" width="1" height="5"/><rect x="521" y="26" width="1" height="5"/><rect x="522" y="29" width="1" height="2"/><rect x="523" y="28" width="1" height="3"/><rect x="524" y="29" width="1" height="2"/><rect x="525" y="30" width="1" height="1"/><rect x="526" y="26" width="1" height="5"/><rect x="527" y="29" width="1" height="2"/><rect x="528" y="29" width="1" height="2"/><rect x="529" y="28" width="1" height="3"/><rect x="530" y="28" width="1" height="3"/><rect x="531" y="26" width="1" height="5"/><rect x="532" y="25" width="1" height="6"/><rect x="533" y="29" width="1" height="2"/><rect x="534" y="28" width="1" height="3"/><rect x="535" y="30" width="1" height="1"/><rect x="536" y="29" width="1" height="2"/><rect x="537" y="28" width="1" height="3"/><rect x="538" y="29" width="1" height="2"/><rect x="539" y="26" width="1" height="5"/><rect x="540" y="28" width="1" height="3"/><rect x="541" y="29" width="1" height="2"/><rect x="542" y="28" width="1" height="3"/><rect x="543" y="28" width="1" height="3"/><rect x="544" y="28" width="1" height="3"/><rect x="545" y="28" width="1" height="3"/><rect x="546" y="28" width="1" height="3"/><rect x="547" y="26" width="1" height="5"/><rect x="548" y="25" width="1" height="6"/><rect x="549" y="30" width="1" height="1"/><rect x="550" y="26" width="1" height="5"/><rect x="551" y="25" width="1" height="6"/><rect x="552" y="28" width="1" height="3"/><rect x="553" y="30" width="1" height="1"/><rect x="554" y="28" width="1" height="3"/><rect x="555" y="28" width="1" height="3"/><rect x="556" y="29" width="1" height="2"/><rect x="557" y="29" width="1" height="2"/><rect x="558" y="26" width="1" height="5"/><rect x="559" y="29" width="1" height="2"/><rect x="560" y="29" width="1" height="2"/><rect x="561" y="30" width="1" height="1"/><rect x="562" y="27" width="1" height="4"/><rect x="563" y="29" width="1" height="2"/><rect x="564" y="30" width="1" height="1"/><rect x="565" y="29" width="1" height="2"/><rect x="566" y="28" width="1" height="3"/><rect x="567" y="29" width="1" height="2"/><rect x="568" y="29" width="1" height="2"/><rect x="569" y="28" width="1" height="3"/><rect x="570" y="27" width="1" height="4"/><rect x="571" y="28" width="1" height="3"/><rect x="572" y="28" width="1" height="3"/><rect x="573" y="25" width="1" height="6"/><rect x="574" y="27" width="1" height="4"/><rect x="575" y="24" width="1" height="7"/><rect x="576" y="22" width="1" height="9"/><rect x="577" y="27" width="1" height="4"/><rect x="578" y="26" width="1" height="5"/><rect x="579" y="22" width="1" height="9"/><rect x="580" y="26" width="1" height="5"/><rect x="581" y="26" width="1" height="5"/><rect x="582" y="26" width="1" height="5"/><rect x="583" y="27" width="1" height="4"/><rect x="584" y="24" width="1" height="7"/><rect x="585" y="22" width="1" height="9"/><rect x="586" y="26" width="1" height="5"/><rect x="587" y="23" width="1" height="8"/><rect x="588" y="24" width="1" height="7"/><rect x="589" y="25" width="1" height="6"/><rect x="590" y="25" width="1" height="6"/><rect x="591" y="23" width="1" height="8"/><rect x="592" y="22" width="1" height="9"/><rect x="593" y="25" width="1" height="6"/><rect x="594" y="25" width="1" height="6"/><rect x="595" y="27" width="1" height="4"/><rect x="596" y="25" width="1" height="6"/><rect x="597" y="27" width="1" height="4"/><rect x="598" y="25" width="1" height="6"/><rect x="599" y="25" width="1" height="6"/><rect x="600" y="25" width="1" height="6"/><rect x="601" y="24" width="1" height="7"/><rect x="602" y="22" width="1" height="9"/><rect x="603" y="25" width="1" height="6"/><rect x="604" y="23" width="1" height="8"/><rect x="605" y="23" width="1" height="8"/><rect x="606" y="25" width="1" height="6"/><rect x="607" y="27" width="1" height="4"/><rect x="608" y="26" width="1" height="5"/><rect x="609" y="27" width="1" height="4"/><rect x="610" y="27" width="1" height="4"/><rect x="611" y="25" width="1" height="6"/><rect x="612" y="23" width="1" height="8"/><rect x="613" y="27" width="1" height="4"/><rect x="614" y="27" width="1" height="4"/><rect x="615" y="25" width="1" height="6"/><rect x="616" y="24" width="1" height="7"/><rect x="617" y="25" width="1" height="6"/><rect x="618" y="27" width="1" height="4"/><rect x="619" y="26" width="1" height="5"/><rect x="620" y="26" width="1" height="5"/><rect x="621" y="26" width="1" height="5"/><rect x="622" y="25" width="1" height="6"/><rect x="623" y="23" width="1" height="8"/><rect x="624" y="25" width="1" height="6"/><rect x="625" y="22" width="1" height="9"/><rect x="626" y="25" width="1" height="6"/><rect x="627" y="25" width="1" height="6"/><rect x="628" y="27" width="1" height="4"/><rect x="629" y="23" width="1" height="8"/><rect x="630" y="23" width="1" height="8"/><rect x="631" y="24" width="1" height="7"/><rect x="632" y="25" width="1" height="6"/><rect x="633" y="22" width="1" height="9"/><rect x="634" y="30" width="1" height="1"/><rect x="635" y="30" width="1" height="1"/><rect x="637" y="29" width="1" height="2"/><rect x="639" y="30" width="1" height="1"/><rect x="641" y="29" width="1" height="2"/><rect x="642" y="30" width="1" height="1"/><rect x="644" y="30" width="1" height="1"/><rect x="645" y="29" width="1" height="2"/><rect x="646" y="29" width="1" height="2"/><rect x="647" y="30" width="1" height="1"/><rect x="649" y="30" width="1" height="1"/><rect x="650" y="30" width="1" height="1"/><rect x="651" y="29" width="1" height="2"/><rect x="653" y="30" width="1" height="1"/><rect x="655" y="30" width="1" height="1"/><rect x="656" y="30" width="1" height="1"/><rect x="660" y="29" width="1" height="2"/><rect x="662" y="29" width="1" height="2"/><rect x="663" y="29" width="1" height="2"/><rect x="665" y="29" width="1" height="2"/><rect x="666" y="29" width="1" height="2"/><rect x="667" y="30" width="1" height="1"/><rect x="668" y="30" width="1" height="1"/><rect x="481" y="20" width="1" height="11"/><rect x="482" y="20" width="1" height="11"/><rect x="524" y="10" width="1" height="21"/><rect x="525" y="23" width="1" height="8"/><rect x="569" y="9" width="1" height="22"/><rect x="570" y="21" width="1" height="10"/><rect x="489" y="25" width="1" height="6"/><rect x="509" y="24" width="1" height="7"/><rect x="554" y="22" width="1" height="9"/><rect x="589" y="22" width="1" height="9"/><rect x="599" y="23" width="1" height="8"/><rect x="609" y="21" width="1" height="10"/><rect x="619" y="24" width="1" height="7"/><rect x="435" y="25" width="1" height="6"/><rect x="455" y="26" width="1" height="5"/><rect x="669" y="30" width="1" height="1"/><rect x="672" y="30" width="1" height="1"/><rect x="678" y="30" width="1" height="1"/><rect x="679" y="30" width="1" height="1"/><rect x="680" y="30" width="1" height="1"/><rect x="684" y="30" width="1" height="1"/><rect x="688" y="30" width="1" height="1"/><rect x="689" y="30" width="1" height="1"/><rect x="690" y="30" width="1" height="1"/><rect x="691" y="30" width="1" height="1"/><rect x="692" y="30" width="1" height="1"/><rect x="694" y="30" width="1" height="1"/><rect x="698" y="30" width="1" height="1"/><rect x="699" y="30" width="1" height="1"/><rect x="702" y="30" width="1" height="1"/><rect x="703" y="30" width="1" height="1"/><rect x="705" y="30" width="1" height="1"/><rect x="707" y="30" width="1" height="1"/><rect x="708" y="30" width="1" height="1"/><rect x="709" y="30" width="1" height="1"/><rect x="711" y="30" width="1" height="1"/><rect x="714" y="30" width="1" height="1"/><rect x="715" y="30" width="1" height="1"/><rect x="716" y="30" width="1" height="1"/><rect x="721" y="30" width="1" height="1"/><rect x="722" y="30" width="1" height="1"/><rect x="723" y="30" width="1" height="1"/><rect x="725" y="30" width="1" height="1"/><rect x="726" y="30" width="1" height="1"/><rect x="727" y="30" width="1" height="1"/><rect x="728" y="30" width="1" height="1"/><rect x="729" y="30" width="1" height="1"/><rect x="733" y="30" width="1" height="1"/><rect x="734" y="30" width="1" height="1"/><rect x="735" y="30" width="1" height="1"/><rect x="736" y="30" width="1" height="1"/><rect x="737" y="30" width="1" height="1"/><rect x="739" y="29" width="1" height="2"/><rect x="740" y="29" width="1" height="2"/><rect x="741" y="29" width="1" height="2"/><rect x="742" y="29" width="1" height="2"/><rect x="743" y="29" width="1" height="2"/><rect x="744" y="29" width="1" height="2"/><rect x="745" y="29" width="1" height="2"/><rect x="746" y="29" width="1" height="2"/><rect x="747" y="29" width="1" height="2"/><rect x="748" y="29" width="1" height="2"/><rect x="749" y="29" width="1" height="2"/><rect x="750" y="29" width="1" height="2"/><rect x="751" y="29" width="1" height="2"/><rect x="752" y="29" width="1" height="2"/><rect x="753" y="29" width="1" height="2"/><rect x="754" y="29" width="1" height="2"/><rect x="755" y="29" width="1" height="2"/><rect x="756" y="29" width="1" height="2"/><rect x="757" y="29" width="1" height="2"/><rect x="758" y="29" width="1" height="2"/><rect x="759" y="29" width="1" height="2"/><rect x="760" y="29" width="1" height="2"/><rect x="761" y="29" width="1" height="2"/><rect x="762" y="29" width="1" height="2"/><rect x="763" y="29" width="1" height="2"/><rect x="764" y="29" width="1" height="2"/><rect x="765" y="29" width="1" height="2"/><rect x="766" y="29" width="1" height="2"/><rect x="767" y="29" width="1" height="2"/><rect x="768" y="29" width="1" height="2"/><rect x="769" y="29" width="1" height="2"/><rect x="770" y="29" width="1" height="2"/><rect x="771" y="29" width="1" height="2"/><rect x="772" y="29" width="1" height="2"/><rect x="773" y="29" width="1" height="2"/><rect x="774" y="29" width="1" height="2"/><rect x="775" y="29" width="1" height="2"/><rect x="776" y="29" width="1" height="2"/><rect x="777" y="29" width="1" height="2"/><rect x="778" y="29" width="1" height="2"/><rect x="779" y="29" width="1" height="2"/><rect x="780" y="29" width="1" height="2"/><rect x="781" y="29" width="1" height="2"/><rect x="782" y="29" width="1" height="2"/><rect x="783" y="29" width="1" height="2"/><rect x="784" y="29" width="1" height="2"/><rect x="785" y="29" width="1" height="2"/><rect x="786" y="29" width="1" height="2"/><rect x="787" y="29" width="1" height="2"/><rect x="788" y="29" width="1" height="2"/><rect x="789" y="29" width="1" height="2"/><rect x="790" y="29" width="1" height="2"/><rect x="791" y="29" width="1" height="2"/><rect x="792" y="29" width="1" height="2"/><rect x="793" y="29" width="1" height="2"/><rect x="794" y="29" width="1" height="2"/><rect x="795" y="29" width="1" height="2"/><rect x="796" y="29" width="1" height="2"/><rect x="797" y="29" width="1" height="2"/><rect x="798" y="29" width="1" height="2"/><rect x="732" y="26" width="1" height="5"/><rect x="759" y="28" width="1" height="3"/><rect x="779" y="28" width="1" height="3"/><rect x="775" y="29" width="1" height="2"/><rect x="795" y="29" width="1" height="2"/><rect x="796" y="29" width="1" height="2"/><rect x="797" y="29" width="1" height="2"/><rect x="798" y="29" width="1" height="2"/><rect x="799" y="29" width="1" height="2"/><rect x="800" y="29" width="1" height="2"/><rect x="801" y="29" width="1" height="2"/><rect x="802" y="28" width="1" height="3"/><rect x="803" y="29" width="1" height="2"/><rect x="804" y="28" width="1" height="3"/><rect x="805" y="27" width="1" height="4"/><rect x="806" y="27" width="1" height="4"/><rect x="807" y="28" width="1" height="3"/><rect x="808" y="27" width="1" height="4"/><rect x="809" y="25" width="1" height="6"/><rect x="810" y="24" width="1" height="7"/><rect x="811" y="24" width="1" height="7"/><rect x="812" y="23" width="1" height="8"/><rect x="813" y="23" width="1" height="8"/><rect x="814" y="24" width="1" height="7"/><rect x="815" y="23" width="1" height="8"/><rect x="816" y="22" width="1" height="9"/><rect x="817" y="25" width="1" height="6"/><rect x="818" y="25" width="1" height="6"/><rect x="819" y="25" width="1" height="6"/><rect x="820" y="25" width="1" height="6"/><rect x="821" y="26" width="1" height="5"/><rect x="822" y="26" width="1" height="5"/></g></svg>
<div style="position:absolute;left:421px;top:338px;width:24px;height:31px;background:repeating-linear-gradient(-45deg,transparent 0,transparent 3.85px,rgba(110,150,140,0.55) 3.85px,rgba(110,150,140,0.55) 4.95px),transparent;"></div>
<div style="position:absolute;left:445px;top:338px;width:224px;height:31px;background:repeating-linear-gradient(-45deg,transparent 0,transparent 4.99px,rgba(100,30,120,0.42) 4.99px,rgba(100,30,120,0.42) 6.29px),repeating-linear-gradient(45deg,transparent 0,transparent 4.99px,rgba(100,30,120,0.42) 4.99px,rgba(100,30,120,0.42) 6.29px),transparent;"></div>
<div style="position:absolute;left:669px;top:338px;width:23px;height:31px;background:repeating-linear-gradient(-45deg,transparent 0,transparent 3.60px,rgba(30,45,15,0.7) 3.60px,rgba(30,45,15,0.7) 4.60px),transparent;"></div>
<div style="position:absolute;left:421px;top:338px;width:1px;height:31px;background:#3ad86a;"></div>
<div style="position:absolute;left:445px;top:338px;width:1px;height:31px;background:#e8e040;"></div>
<div style="position:absolute;left:668.5px;top:338px;width:1px;height:31px;background:#3040c0;"></div>
<div style="position:absolute;left:692px;top:338px;width:1px;height:31px;background:#d06040;"></div>
<div style="position:absolute;left:449px;top:343px;width:2px;height:26px;background:repeating-linear-gradient(#fff 0 2px,transparent 2px 3.5px);"></div>
<svg style="position:absolute;left:433px;top:327px" width="14" height="13"><defs><linearGradient id="tg1" gradientUnits="userSpaceOnUse" x1="6.5" y1="6.0" x2="12" y2="11"><stop offset="0" stop-color="#a0a0a0"/><stop offset="0.35" stop-color="#6a6a6a"/><stop offset="1" stop-color="#3a3a3a"/></linearGradient></defs><path d="M12 11 L12 1 L1 11 Z" fill="url(#tg1)" stroke="#0a0a0a" stroke-width="1.2" stroke-linejoin="miter"/></svg>
<svg style="position:absolute;left:409px;top:368px" width="14" height="13.5"><defs><linearGradient id="tg2" gradientUnits="userSpaceOnUse" x1="6.5" y1="6.25" x2="12" y2="1"><stop offset="0" stop-color="#a0a0a0"/><stop offset="0.35" stop-color="#6a6a6a"/><stop offset="1" stop-color="#3a3a3a"/></linearGradient></defs><path d="M12 1 L12 11.5 L1 1 Z" fill="url(#tg2)" stroke="#0a0a0a" stroke-width="1.2" stroke-linejoin="miter"/></svg>
<svg style="position:absolute;left:668px;top:327px" width="14" height="13"><defs><linearGradient id="tg3" gradientUnits="userSpaceOnUse" x1="6.5" y1="6.0" x2="1" y2="11"><stop offset="0" stop-color="#a0a0a0"/><stop offset="0.35" stop-color="#6a6a6a"/><stop offset="1" stop-color="#3a3a3a"/></linearGradient></defs><path d="M1 11 L1 1 L12 11 Z" fill="url(#tg3)" stroke="#0a0a0a" stroke-width="1.2" stroke-linejoin="miter"/></svg>
<svg style="position:absolute;left:691px;top:368px" width="14" height="13.5"><defs><linearGradient id="tg4" gradientUnits="userSpaceOnUse" x1="6.5" y1="6.25" x2="1" y2="1"><stop offset="0" stop-color="#a0a0a0"/><stop offset="0.35" stop-color="#6a6a6a"/><stop offset="1" stop-color="#3a3a3a"/></linearGradient></defs><path d="M1 1 L1 11.5 L12 1 Z" fill="url(#tg4)" stroke="#0a0a0a" stroke-width="1.2" stroke-linejoin="miter"/></svg>
<div style="position:absolute;left:21px;top:388px;width:14px;height:14px;box-sizing:border-box;border:1.5px solid #d8d8d8;"></div>
<svg style="position:absolute;left:21px;top:387px" width="17" height="16"><path d="M3.4 9 L5.9 11.6 L13.9 2.2" fill="none" stroke="#3a3a3a" stroke-width="4.2"/><path d="M3.4 9 L5.9 11.6 L13.9 2.2" fill="none" stroke="#f4f4f4" stroke-width="2.4"/></svg>
<div style="position:absolute;left:40.5px;top:389.84px;height:12px;line-height:12px;font:normal 12px 'Liberation Sans', sans-serif;color:#e4e4e4;white-space:nowrap;">Saturation</div>
<div style="position:absolute;left:159.5px;top:389.84px;height:12px;line-height:12px;font:normal 12px 'Liberation Sans', sans-serif;color:#e4e4e4;white-space:nowrap;letter-spacing:-0.45px;">Slope</div>
<div style="position:absolute;left:192.5px;top:389.84px;height:12px;line-height:12px;font:normal 12px 'Liberation Sans', sans-serif;color:#e4e4e4;white-space:nowrap;">2</div>
<div style="position:absolute;left:190px;top:403px;width:33px;height:1px;background:repeating-linear-gradient(90deg,rgba(60,95,195,0.75) 0 3px,rgba(60,95,195,0.12) 3px 6.3px);"></div>
<div style="position:absolute;left:239.5px;top:389.84px;height:12px;line-height:12px;font:normal 12px 'Liberation Sans', sans-serif;color:#e4e4e4;white-space:nowrap;letter-spacing:-0.36px;">Begin</div>
<div style="position:absolute;left:273px;top:389.84px;height:12px;line-height:12px;font:normal 12px 'Liberation Sans', sans-serif;color:#e4e4e4;white-space:nowrap;">2</div>
<div style="position:absolute;left:271px;top:403px;width:32px;height:1px;background:repeating-linear-gradient(90deg,rgba(60,95,195,0.75) 0 3px,rgba(60,95,195,0.12) 3px 6.3px);"></div>
<div style="position:absolute;left:317px;top:389.84px;height:12px;line-height:12px;font:normal 12px 'Liberation Sans', sans-serif;color:#e4e4e4;white-space:nowrap;letter-spacing:-0.8px;">End</div>
<div style="position:absolute;left:343px;top:389.84px;height:12px;line-height:12px;font:normal 12px 'Liberation Sans', sans-serif;color:#e4e4e4;white-space:nowrap;">14</div>
<div style="position:absolute;left:337.5px;top:403px;width:31.5px;height:1px;background:repeating-linear-gradient(90deg,rgba(60,95,195,0.75) 0 3px,rgba(60,95,195,0.12) 3px 6.3px);"></div>
<div style="position:absolute;left:382px;top:389.84px;height:12px;line-height:12px;font:normal 12px 'Liberation Sans', sans-serif;color:#e4e4e4;white-space:nowrap;letter-spacing:-0.45px;">Slope</div>
<div style="position:absolute;left:416.5px;top:389.84px;height:12px;line-height:12px;font:normal 12px 'Liberation Sans', sans-serif;color:#e4e4e4;white-space:nowrap;">17</div>
<div style="position:absolute;left:413px;top:403px;width:35px;height:1px;background:repeating-linear-gradient(90deg,rgba(60,95,195,0.75) 0 3px,rgba(60,95,195,0.12) 3px 6.3px);"></div>
<div style="position:absolute;left:31px;top:422px;width:399px;height:23px;background:linear-gradient(90deg,#000,#fff);"></div>
<div style="position:absolute;left:31px;top:422px;width:124px;height:23px;background:rgba(15,15,15,0.6);"></div>
<svg style="position:absolute;left:31px;top:422px" width="124" height="23"><path d="M3.5 23 L3.5 12 L5 12 L5 23 Z" fill="#6a6af8"/><path d="M8 23 L8 1.5 L15 1.5 L16 4 L19 5 L20 7 L22 10 L26 10 L27 12 L30 13 L34 14 L37 16 L40 18.5 L44 20 L50 21 L56 21.5 L124 22 L124 23 Z" fill="#6a6af8"/></svg>
<div style="position:absolute;left:39px;top:422px;width:48px;height:23px;background:repeating-linear-gradient(-45deg,transparent 0,transparent 5.26px,rgba(30,150,130,0.7) 5.26px,rgba(30,150,130,0.7) 6.36px),repeating-linear-gradient(45deg,transparent 0,transparent 5.26px,rgba(30,150,130,0.7) 5.26px,rgba(30,150,130,0.7) 6.36px),transparent;"></div>
<div style="position:absolute;left:31px;top:422px;width:8px;height:23px;background:repeating-linear-gradient(-45deg,transparent 0,transparent 5.26px,rgba(30,150,130,0.5) 5.26px,rgba(30,150,130,0.5) 6.36px),transparent;"></div>
<div style="position:absolute;left:87px;top:422px;width:68px;height:23px;background:repeating-linear-gradient(-45deg,transparent 0,transparent 3.64px,rgba(30,150,130,0.55) 3.64px,rgba(30,150,130,0.55) 4.74px),rgba(60,60,60,0.25);"></div>
<div style="position:absolute;left:31px;top:422px;width:124px;height:23px;box-sizing:border-box;border-top:1px solid #111;border-bottom:1px solid #111;"></div>
<div style="position:absolute;left:31px;top:422px;width:1px;height:23px;background:#30c030;"></div>
<div style="position:absolute;left:39px;top:422px;width:1px;height:23px;background:#e0d040;"></div>
<div style="position:absolute;left:87px;top:422px;width:1px;height:23px;background:#2030d0;"></div>
<div style="position:absolute;left:154px;top:422px;width:2px;height:23px;background:#c030c0;"></div>
<svg style="position:absolute;left:27px;top:411px" width="14" height="13"><defs><linearGradient id="tg5" gradientUnits="userSpaceOnUse" x1="6.5" y1="6.0" x2="12" y2="11"><stop offset="0" stop-color="#a0a0a0"/><stop offset="0.35" stop-color="#6a6a6a"/><stop offset="1" stop-color="#3a3a3a"/></linearGradient></defs><path d="M12 11 L12 1 L1 11 Z" fill="url(#tg5)" stroke="#0a0a0a" stroke-width="1.2" stroke-linejoin="miter"/></svg>
<svg style="position:absolute;left:86px;top:411px" width="14" height="13"><defs><linearGradient id="tg6" gradientUnits="userSpaceOnUse" x1="6.5" y1="6.0" x2="1" y2="11"><stop offset="0" stop-color="#a0a0a0"/><stop offset="0.35" stop-color="#6a6a6a"/><stop offset="1" stop-color="#3a3a3a"/></linearGradient></defs><path d="M1 11 L1 1 L12 11 Z" fill="url(#tg6)" stroke="#0a0a0a" stroke-width="1.2" stroke-linejoin="miter"/></svg>
<svg style="position:absolute;left:19px;top:444px" width="14" height="13.5"><defs><linearGradient id="tg7" gradientUnits="userSpaceOnUse" x1="6.5" y1="6.25" x2="12" y2="1"><stop offset="0" stop-color="#a0a0a0"/><stop offset="0.35" stop-color="#6a6a6a"/><stop offset="1" stop-color="#3a3a3a"/></linearGradient></defs><path d="M12 1 L12 11.5 L1 1 Z" fill="url(#tg7)" stroke="#0a0a0a" stroke-width="1.2" stroke-linejoin="miter"/></svg>
<svg style="position:absolute;left:154px;top:444px" width="14" height="13.5"><defs><linearGradient id="tg8" gradientUnits="userSpaceOnUse" x1="6.5" y1="6.25" x2="1" y2="1"><stop offset="0" stop-color="#a0a0a0"/><stop offset="0.35" stop-color="#6a6a6a"/><stop offset="1" stop-color="#3a3a3a"/></linearGradient></defs><path d="M1 1 L1 11.5 L12 1 Z" fill="url(#tg8)" stroke="#0a0a0a" stroke-width="1.2" stroke-linejoin="miter"/></svg>
<div style="position:absolute;left:463px;top:388px;width:14px;height:14px;box-sizing:border-box;border:1.5px solid #d8d8d8;"></div>
<svg style="position:absolute;left:463px;top:387px" width="17" height="16"><path d="M3.4 9 L5.9 11.6 L13.9 2.2" fill="none" stroke="#3a3a3a" stroke-width="4.2"/><path d="M3.4 9 L5.9 11.6 L13.9 2.2" fill="none" stroke="#f4f4f4" stroke-width="2.4"/></svg>
<div style="position:absolute;left:482.5px;top:389.84px;height:12px;line-height:12px;font:normal 12px 'Liberation Sans', sans-serif;color:#e4e4e4;white-space:nowrap;letter-spacing:-0.47px;">Luminance</div>
<div style="position:absolute;left:604.5px;top:389.84px;height:12px;line-height:12px;font:normal 12px 'Liberation Sans', sans-serif;color:#e4e4e4;white-space:nowrap;letter-spacing:-0.45px;">Slope</div>
<div style="position:absolute;left:639px;top:389.84px;height:12px;line-height:12px;font:normal 12px 'Liberation Sans', sans-serif;color:#e4e4e4;white-space:nowrap;">16</div>
<div style="position:absolute;left:635px;top:403px;width:30px;height:1px;background:repeating-linear-gradient(90deg,rgba(60,95,195,0.75) 0 3px,rgba(60,95,195,0.12) 3px 6.3px);"></div>
<div style="position:absolute;left:676px;top:389.84px;height:12px;line-height:12px;font:normal 12px 'Liberation Sans', sans-serif;color:#e4e4e4;white-space:nowrap;letter-spacing:-0.36px;">Begin</div>
<div style="position:absolute;left:710.5px;top:389.84px;height:12px;line-height:12px;font:normal 12px 'Liberation Sans', sans-serif;color:#e4e4e4;white-space:nowrap;">20</div>
<div style="position:absolute;left:706px;top:403px;width:31px;height:1px;background:repeating-linear-gradient(90deg,rgba(60,95,195,0.75) 0 3px,rgba(60,95,195,0.12) 3px 6.3px);"></div>
<div style="position:absolute;left:751px;top:389.84px;height:12px;line-height:12px;font:normal 12px 'Liberation Sans', sans-serif;color:#e4e4e4;white-space:nowrap;letter-spacing:-0.8px;">End</div>
<div style="position:absolute;left:775px;top:389.84px;height:12px;line-height:12px;font:normal 12px 'Liberation Sans', sans-serif;color:#e4e4e4;white-space:nowrap;">87</div>
<div style="position:absolute;left:770.5px;top:403px;width:31.5px;height:1px;background:repeating-linear-gradient(90deg,rgba(60,95,195,0.75) 0 3px,rgba(60,95,195,0.12) 3px 6.3px);"></div>
<div style="position:absolute;left:817px;top:389.84px;height:12px;line-height:12px;font:normal 12px 'Liberation Sans', sans-serif;color:#e4e4e4;white-space:nowrap;letter-spacing:-0.45px;">Slope</div>
<div style="position:absolute;left:851.5px;top:389.84px;height:12px;line-height:12px;font:normal 12px 'Liberation Sans', sans-serif;color:#e4e4e4;white-space:nowrap;">103</div>
<div style="position:absolute;left:847px;top:403px;width:30px;height:1px;background:repeating-linear-gradient(90deg,rgba(60,95,195,0.75) 0 3px,rgba(60,95,195,0.12) 3px 6.3px);"></div>
<div style="position:absolute;left:467px;top:422px;width:400px;height:23px;background:linear-gradient(90deg,#000,#fff);"></div>
<div style="position:absolute;left:467px;top:422px;width:299px;height:23px;background:rgba(20,20,20,0.15);"></div>
<svg style="position:absolute;left:467px;top:422px" width="400" height="23"><path d="M30.0 23.0 L32.0 21.0 L35.0 14.7 L39.0 12.0 L43.0 10.2 L48.0 9.0 L53.0 7.6 L58.0 4.9 L63.0 5.5 L68.0 4.9 L72.0 3.0 L76.0 1.9 L80.0 3.0 L83.0 4.9 L88.0 6.0 L93.0 7.6 L98.0 8.0 L103.0 9.3 L108.0 9.5 L113.0 10.2 L118.0 11.5 L123.0 12.9 L128.0 13.5 L133.0 14.7 L143.0 16.4 L153.0 17.6 L183.0 18.6 L233.0 19.8 L299.0 21.0 L300.0 22.5 L400.0 22.5 L400.0 23.0 Z" fill="#6a6af8"/><rect x="323" y="21.5" width="4" height="1.5" fill="#6a6af8"/><rect x="340" y="21" width="8" height="2" fill="#6a6af8"/><rect x="360" y="21.5" width="3" height="1.5" fill="#6a6af8"/></svg>
<div style="position:absolute;left:467px;top:422px;width:6px;height:23px;background:repeating-linear-gradient(-45deg,transparent 0,transparent 3.85px,rgba(30,160,150,0.6) 3.85px,rgba(30,160,150,0.6) 4.95px),transparent;"></div>
<div style="position:absolute;left:467px;top:422px;width:32px;height:23px;background:rgba(0,0,0,0.7);"></div>
<div style="position:absolute;left:473px;top:422px;width:26px;height:23px;background:repeating-linear-gradient(-45deg,transparent 0,transparent 3.64px,rgba(30,150,130,0.6) 3.64px,rgba(30,150,130,0.6) 4.74px),transparent;"></div>
<div style="position:absolute;left:499px;top:422px;width:105px;height:23px;background:repeating-linear-gradient(-45deg,transparent 0,transparent 5.26px,rgba(30,150,130,0.7) 5.26px,rgba(30,150,130,0.7) 6.36px),repeating-linear-gradient(45deg,transparent 0,transparent 5.26px,rgba(30,150,130,0.7) 5.26px,rgba(30,150,130,0.7) 6.36px),transparent;"></div>
<div style="position:absolute;left:604px;top:422px;width:162px;height:23px;background:repeating-linear-gradient(-45deg,transparent 0,transparent 3.64px,rgba(30,150,130,0.55) 3.64px,rgba(30,150,130,0.55) 4.74px),transparent;"></div>
<div style="position:absolute;left:467px;top:422px;width:299px;height:23px;box-sizing:border-box;border-top:1px solid #111;border-bottom:1px solid #111;"></div>
<div style="position:absolute;left:467px;top:422px;width:2px;height:23px;background:#111;"></div>
<div style="position:absolute;left:473px;top:422px;width:1px;height:23px;background:#30c030;"></div>
<div style="position:absolute;left:499px;top:422px;width:1px;height:23px;background:#e0d040;"></div>
<div style="position:absolute;left:604px;top:422px;width:1px;height:23px;background:#2030d0;"></div>
<div style="position:absolute;left:766px;top:422px;width:2px;height:23px;background:#c030c0;"></div>
<svg style="position:absolute;left:487px;top:411px" width="14" height="13"><defs><linearGradient id="tg9" gradientUnits="userSpaceOnUse" x1="6.5" y1="6.0" x2="12" y2="11"><stop offset="0" stop-color="#a0a0a0"/><stop offset="0.35" stop-color="#6a6a6a"/><stop offset="1" stop-color="#3a3a3a"/></linearGradient></defs><path d="M12 11 L12 1 L1 11 Z" fill="url(#tg9)" stroke="#0a0a0a" stroke-width="1.2" stroke-linejoin="miter"/></svg>
<svg style="position:absolute;left:603px;top:411px" width="14" height="13"><defs><linearGradient id="tg10" gradientUnits="userSpaceOnUse" x1="6.5" y1="6.0" x2="1" y2="11"><stop offset="0" stop-color="#a0a0a0"/><stop offset="0.35" stop-color="#6a6a6a"/><stop offset="1" stop-color="#3a3a3a"/></linearGradient></defs><path d="M1 11 L1 1 L12 11 Z" fill="url(#tg10)" stroke="#0a0a0a" stroke-width="1.2" stroke-linejoin="miter"/></svg>
<svg style="position:absolute;left:461px;top:444px" width="14" height="13.5"><defs><linearGradient id="tg11" gradientUnits="userSpaceOnUse" x1="6.5" y1="6.25" x2="12" y2="1"><stop offset="0" stop-color="#a0a0a0"/><stop offset="0.35" stop-color="#6a6a6a"/><stop offset="1" stop-color="#3a3a3a"/></linearGradient></defs><path d="M12 1 L12 11.5 L1 1 Z" fill="url(#tg11)" stroke="#0a0a0a" stroke-width="1.2" stroke-linejoin="miter"/></svg>
<svg style="position:absolute;left:765px;top:444px" width="14" height="13.5"><defs><linearGradient id="tg12" gradientUnits="userSpaceOnUse" x1="6.5" y1="6.25" x2="1" y2="1"><stop offset="0" stop-color="#a0a0a0"/><stop offset="0.35" stop-color="#6a6a6a"/><stop offset="1" stop-color="#3a3a3a"/></linearGradient></defs><path d="M1 1 L1 11.5 L12 1 Z" fill="url(#tg12)" stroke="#0a0a0a" stroke-width="1.2" stroke-linejoin="miter"/></svg>
<div style="position:absolute;left:9px;top:481px;width:435px;height:45px;box-sizing:border-box;border:1px solid #141414;"></div>
<div style="position:absolute;left:10px;top:482px;width:433px;height:43px;box-sizing:border-box;border:1px solid #5c5c5c;"></div>
<div style="position:absolute;left:16px;top:475px;width:4px;height:10px;background:#4b4b4b;"></div>
<div style="position:absolute;left:18.5px;top:473.84px;height:12px;line-height:12px;font:normal 12px 'Liberation Sans', sans-serif;color:#e4e4e4;white-space:nowrap;background:#4b4b4b;padding:0 2px;margin-left:-2px;letter-spacing:-0.43px;">ColorPicker</div>
<div style="position:absolute;left:20.00px;top:495px;width:15px;height:15px;box-sizing:border-box;border-radius:50%;border:1.6px solid #d4d4d4;"></div>
<div style="position:absolute;left:40.5px;top:496.84px;height:12px;line-height:12px;font:normal 12px 'Liberation Sans', sans-serif;color:#e4e4e4;white-space:nowrap;letter-spacing:-0.6px;">Black</div>
<div style="position:absolute;left:99.25px;top:495px;width:15px;height:15px;box-sizing:border-box;border-radius:50%;border:1.6px solid #d4d4d4;"></div>
<div style="position:absolute;left:119.75px;top:496.84px;height:12px;line-height:12px;font:normal 12px 'Liberation Sans', sans-serif;color:#e4e4e4;white-space:nowrap;">Gray</div>
<div style="position:absolute;left:178.50px;top:495px;width:15px;height:15px;box-sizing:border-box;border-radius:50%;border:1.6px solid #d4d4d4;"></div>
<div style="position:absolute;left:199.0px;top:496.84px;height:12px;line-height:12px;font:normal 12px 'Liberation Sans', sans-serif;color:#e4e4e4;white-space:nowrap;">White</div>
<div style="position:absolute;left:257.75px;top:495px;width:15px;height:15px;box-sizing:border-box;border-radius:50%;border:1.6px solid #d4d4d4;"></div>
<div style="position:absolute;left:278.25px;top:496.84px;height:12px;line-height:12px;font:normal 12px 'Liberation Sans', sans-serif;color:#e4e4e4;white-space:nowrap;">Auto</div>
<div style="position:absolute;left:337.00px;top:495px;width:15px;height:15px;box-sizing:border-box;border-radius:50%;border:1.6px solid #d4d4d4;"></div>
<div style="position:absolute;left:341.50px;top:499.5px;width:6px;height:6px;border-radius:50%;background:#f4f4f4;"></div>
<div style="position:absolute;left:357.5px;top:496.84px;height:12px;line-height:12px;font:normal 12px 'Liberation Sans', sans-serif;color:#e4e4e4;white-space:nowrap;">Color range</div>
<div style="position:absolute;left:648px;top:481px;width:243px;height:46px;box-sizing:border-box;border:1px solid #141414;"></div>
<div style="position:absolute;left:649px;top:482px;width:241px;height:44px;box-sizing:border-box;border:1px solid #5c5c5c;"></div>
<div style="position:absolute;left:655px;top:475px;width:4px;height:10px;background:#4b4b4b;"></div>
<div style="position:absolute;left:657px;top:473.84px;height:12px;line-height:12px;font:normal 12px 'Liberation Sans', sans-serif;color:#e4e4e4;white-space:nowrap;background:#4b4b4b;padding:0 2px;margin-left:-2px;letter-spacing:-0.1px;">Preview</div>
<div style="position:absolute;left:659px;top:493px;width:23px;height:20px;box-sizing:border-box;border-radius:3px;background:#707070;border-top:1px solid #888;box-shadow:0 1px 0 #262626;"></div>
<svg style="position:absolute;left:659px;top:493px" width="23" height="20"><path d="M9 14.5 L13.5 6 Q14.5 4 16 5 Q17.2 6 16 8 L11.5 16 Q10 17.5 8.8 16.5 Q8 15.8 9 14.5 Z" fill="none" stroke="#e8e8e8" stroke-width="1.1"/></svg>
<div style="position:absolute;left:691.5px;top:493px;width:22.5px;height:20.5px;box-sizing:border-box;border-radius:4px;background:#5c5c5c;box-shadow:inset 0 0 0 2px #7a7a7a,inset 0 0 0 3px #666,0 1px 1px #1a1a1a;"></div>
<div style="position:absolute;left:695.5px;top:497.5px;width:15px;height:11px;box-sizing:border-box;border:1.3px solid #0a0a0a;background:#fff;"></div>
<div style="position:absolute;left:718px;top:493px;width:22.5px;height:20.5px;box-sizing:border-box;border-radius:4px;background:#5c5c5c;box-shadow:inset 0 0 0 2px #7a7a7a,inset 0 0 0 3px #666,0 1px 1px #1a1a1a;"></div>
<div style="position:absolute;left:722px;top:497.5px;width:15px;height:11px;box-sizing:border-box;border:1.3px solid #0a0a0a;background:#fff;"></div>
<div style="position:absolute;left:730.5px;top:499.5px;width:4.8px;height:7.0px;background:#000;"></div>
<div style="position:absolute;left:745.5px;top:493px;width:22.5px;height:20.5px;box-sizing:border-box;border-radius:4px;background:#5c5c5c;box-shadow:inset 0 0 0 2px #7a7a7a,inset 0 0 0 3px #666,0 1px 1px #1a1a1a;"></div>
<div style="position:absolute;left:749.5px;top:497.5px;width:15px;height:11px;box-sizing:border-box;border:1.3px solid #0a0a0a;background:#fff;"></div>
<div style="position:absolute;left:751.5px;top:499.5px;width:4.8px;height:7.0px;background:#000;"></div>
<div style="position:absolute;left:773.5px;top:493px;width:22.5px;height:20.5px;box-sizing:border-box;border-radius:4px;background:#5c5c5c;box-shadow:inset 0 0 0 2px #7a7a7a,inset 0 0 0 3px #666,0 1px 1px #1a1a1a;"></div>
<div style="position:absolute;left:777.5px;top:497.5px;width:15px;height:11px;box-sizing:border-box;border:1.3px solid #0a0a0a;background:#fff;"></div>
<div style="position:absolute;left:779.8px;top:502.7px;width:10.4px;height:3.5px;background:#000;"></div>
<div style="position:absolute;left:800.5px;top:493px;width:22.5px;height:20.5px;box-sizing:border-box;border-radius:4px;background:#5c5c5c;box-shadow:inset 0 0 0 2px #7a7a7a,inset 0 0 0 3px #666,0 1px 1px #1a1a1a;"></div>
<div style="position:absolute;left:804.5px;top:497.5px;width:15px;height:11px;box-sizing:border-box;border:1.3px solid #0a0a0a;background:#fff;"></div>
<div style="position:absolute;left:806.8px;top:499.8px;width:10.4px;height:3.5px;background:#000;"></div>
<div style="position:absolute;left:676px;width:200px;text-align:right;top:496.84px;height:12px;line-height:12px;font:12px 'Liberation Sans', sans-serif;color:#e4e4e4;white-space:nowrap;">50%</div>
<div style="position:absolute;left:830px;top:511px;width:50px;height:1px;background:repeating-linear-gradient(90deg,rgba(60,95,195,0.75) 0 3px,rgba(60,95,195,0.12) 3px 6.3px);"></div>
<div style="position:absolute;left:9px;top:534px;width:882px;height:226px;background:#262626;"></div>
<div style="position:absolute;left:9px;top:534px;width:321px;height:1px;background:#7a7a7a;"></div>
<div style="position:absolute;left:10px;top:535px;width:319px;height:38px;background:#6b6b6b;"></div>
<div style="position:absolute;left:109px;top:535px;width:1px;height:38px;background:#555;"></div>
<div style="position:absolute;left:14px;top:537px;width:94px;height:14px;box-sizing:border-box;background:#262626;border:1px solid #555;border-bottom-color:#808080;"></div>
<div style="position:absolute;left:77px;top:539px;width:19px;height:10px;border-radius:5px;background:linear-gradient(#8a8a8a,#6a6a6a);"></div>
<div style="position:absolute;left:83px;top:541px;width:7px;height:6px;background:repeating-linear-gradient(90deg,#eee 0 1px,transparent 1px 3px);"></div>
<div style="position:absolute;left:10px;top:552px;width:99px;height:1px;background:#555;"></div>
<svg style="position:absolute;left:10px;top:556px" width="99" height="20"><path d="M4 8.5 L9 3.5 L9 13.5 Z" fill="#eee"/><path d="M76.5 6 L86 6 L81.2 11 Z" fill="#eee"/><path d="M91 3.5 L96 8.5 L91 13.5 Z" fill="#eee"/></svg>
<div style="position:absolute;left:47.5px;top:556.84px;height:12px;line-height:12px;font:normal 12px 'Liberation Sans', sans-serif;color:#e8e8e8;white-space:nowrap;letter-spacing:0.5px;">Fit</div>
<svg style="position:absolute;left:130px;top:541px" width="180" height="28"><path d="M7.5 5 L26 13.5 L7.5 22 Z" fill="none" stroke="#202a10" stroke-width="4.2" stroke-linejoin="round"/><path d="M7.5 5 L26 13.5 L7.5 22 Z" fill="none" stroke="#8ce030" stroke-width="2.4" stroke-linejoin="round"/><g transform="translate(1,1)"><rect x="49.75" y="7.25" width="14.7" height="8" fill="none" stroke="#1c1c1c" stroke-width="2.5"/><path d="M54.8 14.5 L61.5 14.5 L55.5 21 Z" fill="#1c1c1c"/><path d="M85.5 9.5 L90 6 L90 13 Z" fill="#1c1c1c"/><path d="M89 9.5 L99.4 9.5 L99.4 16.8 L90.5 16.8" fill="none" stroke="#1c1c1c" stroke-width="2.6"/><path d="M136 9.5 L131.5 6 L131.5 13 Z" fill="#1c1c1c"/><path d="M132.5 9.5 L121.6 9.5 L121.6 16.8 L131 16.8" fill="none" stroke="#1c1c1c" stroke-width="2.6"/><path d="M157.3 7.5 L157.3 18.6 L173.6 18.6" fill="none" stroke="#1c1c1c" stroke-width="1.4"/><path d="M158.5 16 L162.3 8.5 L166 15.5 L170 9 L173.2 14.5" fill="none" stroke="#1c1c1c" stroke-width="1.5"/></g><rect x="49.75" y="7.25" width="14.7" height="8" fill="none" stroke="#f6f6f6" stroke-width="2.5"/><path d="M54.8 14.5 L61.5 14.5 L55.5 21 Z" fill="#f6f6f6"/><path d="M85.5 9.5 L90 6 L90 13 Z" fill="#f6f6f6"/><path d="M89 9.5 L99.4 9.5 L99.4 16.8 L90.5 16.8" fill="none" stroke="#f6f6f6" stroke-width="2.6"/><path d="M136 9.5 L131.5 6 L131.5 13 Z" fill="#bcbcbc"/><path d="M132.5 9.5 L121.6 9.5 L121.6 16.8 L131 16.8" fill="none" stroke="#bcbcbc" stroke-width="2.6"/><path d="M157.3 7.5 L157.3 18.6 L173.6 18.6" fill="none" stroke="#bcbcbc" stroke-width="1.4"/><path d="M158.5 16 L162.3 8.5 L166 15.5 L170 9 L173.2 14.5" fill="none" stroke="#bcbcbc" stroke-width="1.5"/></svg>
<div style="position:absolute;left:10px;top:573px;width:319px;height:186px;background:#262626;"></div>
<div style="position:absolute;left:329px;top:535px;width:4px;height:224px;background:#5a5a5a;"></div>
<svg style="position:absolute;left:12px;top:578px" width="14" height="12"><path d="M1.5 3 L10.5 3 L6 9 Z" fill="#f0f0f0"/></svg>
<div style="position:absolute;left:27px;top:577.5px;width:15px;height:14px;box-sizing:border-box;border:1.5px solid #dcdcdc;"></div>
<svg style="position:absolute;left:48.5px;top:577px" width="14" height="16"><path d="M3 6 L9 6 Q12 6 12 9 Q12 12 9 12 L3 12" fill="none" stroke="#f0f0f0" stroke-width="2"/><path d="M1.5 6 L5 3 L5 9 Z" fill="#f0f0f0"/></svg>
<div style="position:absolute;left:69px;top:576.84px;height:12px;line-height:12px;font:normal 12px 'Liberation Sans', sans-serif;color:#e8e8e8;white-space:nowrap;letter-spacing:0.3px;">3-Way Color Correction</div>
<svg style="position:absolute;left:280px;top:579px" width="42" height="12"><path d="M1 6 L8 2 L8 10 Z" fill="#c8c8c8"/><path d="M17 6 L21 2 L25 6 L21 10 Z" fill="#c8c8c8"/><path d="M38 6 L31 2 L31 10 Z" fill="#c8c8c8"/></svg>
<div style="position:absolute;left:27px;top:595px;width:302px;height:2px;background:#6a6a6a;"></div>
<div style="position:absolute;left:27px;top:595px;width:2px;height:22px;background:#555;"></div>
<svg style="position:absolute;left:32px;top:601px" width="10" height="14"><path d="M2 1.5 L7.5 6.5 L2 11.5 Z" fill="#f0f0f0"/></svg>
<div style="position:absolute;left:45px;top:600px;width:15px;height:14px;box-sizing:border-box;border:1.5px solid #dcdcdc;"></div>
<svg style="position:absolute;left:66px;top:599px" width="14" height="16"><path d="M3 6 L9 6 Q12 6 12 9 Q12 12 9 12 L3 12" fill="none" stroke="#f0f0f0" stroke-width="2"/><path d="M1.5 6 L5 3 L5 9 Z" fill="#f0f0f0"/></svg>
<div style="position:absolute;left:86px;top:598.84px;height:12px;line-height:12px;font:normal 12px 'Liberation Sans', sans-serif;color:#e8e8e8;white-space:nowrap;letter-spacing:0.3px;">Black</div>
<svg style="position:absolute;left:280px;top:601px" width="42" height="12"><path d="M1 6 L8 2 L8 10 Z" fill="#c8c8c8"/><path d="M17 6 L21 2 L25 6 L21 10 Z" fill="#c8c8c8"/><path d="M38 6 L31 2 L31 10 Z" fill="#c8c8c8"/></svg>
<div style="position:absolute;left:27px;top:617px;width:302px;height:2px;background:#6a6a6a;"></div>
<div style="position:absolute;left:27px;top:617px;width:2px;height:22px;background:#555;"></div>
<svg style="position:absolute;left:32px;top:623px" width="10" height="14"><path d="M2 1.5 L7.5 6.5 L2 11.5 Z" fill="#f0f0f0"/></svg>
<div style="position:absolute;left:45px;top:622px;width:15px;height:14px;box-sizing:border-box;border:1.5px solid #dcdcdc;"></div>
<svg style="position:absolute;left:66px;top:621px" width="14" height="16"><path d="M3 6 L9 6 Q12 6 12 9 Q12 12 9 12 L3 12" fill="none" stroke="#f0f0f0" stroke-width="2"/><path d="M1.5 6 L5 3 L5 9 Z" fill="#f0f0f0"/></svg>
<div style="position:absolute;left:86px;top:620.84px;height:12px;line-height:12px;font:normal 12px 'Liberation Sans', sans-serif;color:#e8e8e8;white-space:nowrap;letter-spacing:0.3px;">Gray</div>
<svg style="position:absolute;left:280px;top:623px" width="42" height="12"><path d="M1 6 L8 2 L8 10 Z" fill="#c8c8c8"/><path d="M17 6 L21 2 L25 6 L21 10 Z" fill="#c8c8c8"/><path d="M38 6 L31 2 L31 10 Z" fill="#c8c8c8"/></svg>
<div style="position:absolute;left:27px;top:639px;width:302px;height:2px;background:#6a6a6a;"></div>
<div style="position:absolute;left:27px;top:639px;width:2px;height:22px;background:#555;"></div>
<svg style="position:absolute;left:32px;top:645px" width="10" height="14"><path d="M2 1.5 L7.5 6.5 L2 11.5 Z" fill="#f0f0f0"/></svg>
<div style="position:absolute;left:45px;top:644px;width:15px;height:14px;box-sizing:border-box;border:1.5px solid #dcdcdc;"></div>
<svg style="position:absolute;left:66px;top:643px" width="14" height="16"><path d="M3 6 L9 6 Q12 6 12 9 Q12 12 9 12 L3 12" fill="none" stroke="#f0f0f0" stroke-width="2"/><path d="M1.5 6 L5 3 L5 9 Z" fill="#f0f0f0"/></svg>
<div style="position:absolute;left:86px;top:642.84px;height:12px;line-height:12px;font:normal 12px 'Liberation Sans', sans-serif;color:#e8e8e8;white-space:nowrap;letter-spacing:0.3px;">White</div>
<svg style="position:absolute;left:280px;top:645px" width="42" height="12"><path d="M1 6 L8 2 L8 10 Z" fill="#c8c8c8"/><path d="M17 6 L21 2 L25 6 L21 10 Z" fill="#c8c8c8"/><path d="M38 6 L31 2 L31 10 Z" fill="#c8c8c8"/></svg>
<div style="position:absolute;left:27px;top:661px;width:302px;height:2px;background:#6a6a6a;"></div>
<div style="position:absolute;left:27px;top:661px;width:2px;height:22px;background:#555;"></div>
<svg style="position:absolute;left:32px;top:667px" width="10" height="14"><path d="M2 1.5 L7.5 6.5 L2 11.5 Z" fill="#f0f0f0"/></svg>
<div style="position:absolute;left:45px;top:666px;width:15px;height:14px;box-sizing:border-box;border:1.5px solid #dcdcdc;"></div>
<svg style="position:absolute;left:66px;top:665px" width="14" height="16"><path d="M3 6 L9 6 Q12 6 12 9 Q12 12 9 12 L3 12" fill="none" stroke="#f0f0f0" stroke-width="2"/><path d="M1.5 6 L5 3 L5 9 Z" fill="#f0f0f0"/></svg>
<div style="position:absolute;left:86px;top:664.84px;height:12px;line-height:12px;font:normal 12px 'Liberation Sans', sans-serif;color:#e8e8e8;white-space:nowrap;letter-spacing:0.3px;">Hue limit</div>
<svg style="position:absolute;left:280px;top:667px" width="42" height="12"><path d="M1 6 L8 2 L8 10 Z" fill="#c8c8c8"/><path d="M17 6 L21 2 L25 6 L21 10 Z" fill="#c8c8c8"/><path d="M38 6 L31 2 L31 10 Z" fill="#c8c8c8"/></svg>
<div style="position:absolute;left:27px;top:683px;width:302px;height:2px;background:#6a6a6a;"></div>
<div style="position:absolute;left:27px;top:683px;width:2px;height:22px;background:#555;"></div>
<svg style="position:absolute;left:32px;top:689px" width="10" height="14"><path d="M2 1.5 L7.5 6.5 L2 11.5 Z" fill="#f0f0f0"/></svg>
<div style="position:absolute;left:45px;top:688px;width:15px;height:14px;box-sizing:border-box;border:1.5px solid #dcdcdc;"></div>
<svg style="position:absolute;left:66px;top:687px" width="14" height="16"><path d="M3 6 L9 6 Q12 6 12 9 Q12 12 9 12 L3 12" fill="none" stroke="#f0f0f0" stroke-width="2"/><path d="M1.5 6 L5 3 L5 9 Z" fill="#f0f0f0"/></svg>
<div style="position:absolute;left:86px;top:686.84px;height:12px;line-height:12px;font:normal 12px 'Liberation Sans', sans-serif;color:#e8e8e8;white-space:nowrap;letter-spacing:0.3px;">Saturation limit</div>
<svg style="position:absolute;left:280px;top:689px" width="42" height="12"><path d="M1 6 L8 2 L8 10 Z" fill="#c8c8c8"/><path d="M17 6 L21 2 L25 6 L21 10 Z" fill="#c8c8c8"/><path d="M38 6 L31 2 L31 10 Z" fill="#c8c8c8"/></svg>
<div style="position:absolute;left:27px;top:705px;width:302px;height:2px;background:#6a6a6a;"></div>
<div style="position:absolute;left:27px;top:705px;width:2px;height:22px;background:#555;"></div>
<svg style="position:absolute;left:32px;top:711px" width="10" height="14"><path d="M2 1.5 L7.5 6.5 L2 11.5 Z" fill="#f0f0f0"/></svg>
<div style="position:absolute;left:45px;top:710px;width:15px;height:14px;box-sizing:border-box;border:1.5px solid #dcdcdc;"></div>
<svg style="position:absolute;left:66px;top:709px" width="14" height="16"><path d="M3 6 L9 6 Q12 6 12 9 Q12 12 9 12 L3 12" fill="none" stroke="#f0f0f0" stroke-width="2"/><path d="M1.5 6 L5 3 L5 9 Z" fill="#f0f0f0"/></svg>
<div style="position:absolute;left:86px;top:708.84px;height:12px;line-height:12px;font:normal 12px 'Liberation Sans', sans-serif;color:#e8e8e8;white-space:nowrap;letter-spacing:0.3px;">Luminance limit</div>
<svg style="position:absolute;left:280px;top:711px" width="42" height="12"><path d="M1 6 L8 2 L8 10 Z" fill="#c8c8c8"/><path d="M17 6 L21 2 L25 6 L21 10 Z" fill="#c8c8c8"/><path d="M38 6 L31 2 L31 10 Z" fill="#c8c8c8"/></svg>
<div style="position:absolute;left:15px;top:741.84px;height:12px;line-height:12px;font:normal 12px 'Liberation Sans', sans-serif;color:#e8e8e8;white-space:nowrap;letter-spacing:-0.25px;">Cur: 00:00:03:04</div>
<div style="position:absolute;left:112px;top:741.84px;height:12px;line-height:12px;font:normal 12px 'Liberation Sans', sans-serif;color:#e8e8e8;white-space:nowrap;letter-spacing:-0.25px;">Ttl: 00:00:48:04</div>
<div style="position:absolute;left:333px;top:535px;width:538px;height:38px;background:#a6afb8;"></div>
<div style="position:absolute;left:871px;top:535px;width:18px;height:38px;background:#4a4a4a;"></div>
<div style="position:absolute;left:889px;top:534px;width:2px;height:226px;background:#111;"></div>
<div style="position:absolute;left:333px;top:573px;width:538px;height:2px;background:#3a3a3a;"></div>
<div style="position:absolute;left:333.75px;top:550.5px;width:1.5px;height:14.5px;background:#4a5058;"></div>
<div style="position:absolute;left:338.5px;top:547.00px;width:62.0px;overflow:hidden;height:13px;"><div style="height:13px;line-height:13px;font:13px 'Liberation Sans', sans-serif;color:#2c3238;white-space:nowrap;transform:scaleX(0.855);transform-origin:0 0;">00:00:00:00</div></div>
<div style="position:absolute;left:340px;top:563.5px;width:1px;height:2.0px;background:#48505a;"></div>
<div style="position:absolute;left:347px;top:563.5px;width:1px;height:2.0px;background:#48505a;"></div>
<div style="position:absolute;left:354px;top:561.5px;width:1px;height:4.0px;background:#48505a;"></div>
<div style="position:absolute;left:361px;top:563.5px;width:1px;height:2.0px;background:#48505a;"></div>
<div style="position:absolute;left:368px;top:563.5px;width:1px;height:2.0px;background:#48505a;"></div>
<div style="position:absolute;left:375px;top:561.5px;width:1px;height:4.0px;background:#48505a;"></div>
<div style="position:absolute;left:382px;top:563.5px;width:1px;height:2.0px;background:#48505a;"></div>
<div style="position:absolute;left:389px;top:563.5px;width:1px;height:2.0px;background:#48505a;"></div>
<div style="position:absolute;left:396px;top:561.5px;width:1px;height:4.0px;background:#48505a;"></div>
<div style="position:absolute;left:403px;top:563.5px;width:1px;height:2.0px;background:#48505a;"></div>
<div style="position:absolute;left:410px;top:563.5px;width:1px;height:2.0px;background:#48505a;"></div>
<div style="position:absolute;left:417px;top:561.5px;width:1px;height:4.0px;background:#48505a;"></div>
<div style="position:absolute;left:424px;top:563.5px;width:1px;height:2.0px;background:#48505a;"></div>
<div style="position:absolute;left:431px;top:563.5px;width:1px;height:2.0px;background:#48505a;"></div>
<div style="position:absolute;left:437.75px;top:550.5px;width:1.5px;height:14.5px;background:#4a5058;"></div>
<div style="position:absolute;left:443.2px;top:547.00px;width:62.0px;overflow:hidden;height:13px;"><div style="height:13px;line-height:13px;font:13px 'Liberation Sans', sans-serif;color:#2c3238;white-space:nowrap;transform:scaleX(0.855);transform-origin:0 0;">00:00:01:00</div></div>
<div style="position:absolute;left:445px;top:563.5px;width:1px;height:2.0px;background:#48505a;"></div>
<div style="position:absolute;left:452px;top:563.5px;width:1px;height:2.0px;background:#48505a;"></div>
<div style="position:absolute;left:459px;top:561.5px;width:1px;height:4.0px;background:#48505a;"></div>
<div style="position:absolute;left:466px;top:563.5px;width:1px;height:2.0px;background:#48505a;"></div>
<div style="position:absolute;left:473px;top:563.5px;width:1px;height:2.0px;background:#48505a;"></div>
<div style="position:absolute;left:480px;top:561.5px;width:1px;height:4.0px;background:#48505a;"></div>
<div style="position:absolute;left:487px;top:563.5px;width:1px;height:2.0px;background:#48505a;"></div>
<div style="position:absolute;left:494px;top:563.5px;width:1px;height:2.0px;background:#48505a;"></div>
<div style="position:absolute;left:501px;top:561.5px;width:1px;height:4.0px;background:#48505a;"></div>
<div style="position:absolute;left:508px;top:563.5px;width:1px;height:2.0px;background:#48505a;"></div>
<div style="position:absolute;left:515px;top:563.5px;width:1px;height:2.0px;background:#48505a;"></div>
<div style="position:absolute;left:522px;top:561.5px;width:1px;height:4.0px;background:#48505a;"></div>
<div style="position:absolute;left:529px;top:563.5px;width:1px;height:2.0px;background:#48505a;"></div>
<div style="position:absolute;left:536px;top:563.5px;width:1px;height:2.0px;background:#48505a;"></div>
<div style="position:absolute;left:542.75px;top:550.5px;width:1.5px;height:14.5px;background:#4a5058;"></div>
<div style="position:absolute;left:548.0px;top:547.00px;width:62.0px;overflow:hidden;height:13px;"><div style="height:13px;line-height:13px;font:13px 'Liberation Sans', sans-serif;color:#2c3238;white-space:nowrap;transform:scaleX(0.855);transform-origin:0 0;">00:00:02:00</div></div>
<div style="position:absolute;left:550px;top:563.5px;width:1px;height:2.0px;background:#48505a;"></div>
<div style="position:absolute;left:557px;top:563.5px;width:1px;height:2.0px;background:#48505a;"></div>
<div style="position:absolute;left:564px;top:561.5px;width:1px;height:4.0px;background:#48505a;"></div>
<div style="position:absolute;left:571px;top:563.5px;width:1px;height:2.0px;background:#48505a;"></div>
<div style="position:absolute;left:578px;top:563.5px;width:1px;height:2.0px;background:#48505a;"></div>
<div style="position:absolute;left:585px;top:561.5px;width:1px;height:4.0px;background:#48505a;"></div>
<div style="position:absolute;left:592px;top:563.5px;width:1px;height:2.0px;background:#48505a;"></div>
<div style="position:absolute;left:599px;top:563.5px;width:1px;height:2.0px;background:#48505a;"></div>
<div style="position:absolute;left:606px;top:561.5px;width:1px;height:4.0px;background:#48505a;"></div>
<div style="position:absolute;left:613px;top:563.5px;width:1px;height:2.0px;background:#48505a;"></div>
<div style="position:absolute;left:620px;top:563.5px;width:1px;height:2.0px;background:#48505a;"></div>
<div style="position:absolute;left:627px;top:561.5px;width:1px;height:4.0px;background:#48505a;"></div>
<div style="position:absolute;left:634px;top:563.5px;width:1px;height:2.0px;background:#48505a;"></div>
<div style="position:absolute;left:641px;top:563.5px;width:1px;height:2.0px;background:#48505a;"></div>
<div style="position:absolute;left:647.75px;top:550.5px;width:1.5px;height:14.5px;background:#4a5058;"></div>
<div style="position:absolute;left:652.8px;top:547.00px;width:62.0px;overflow:hidden;height:13px;"><div style="height:13px;line-height:13px;font:13px 'Liberation Sans', sans-serif;color:#2c3238;white-space:nowrap;transform:scaleX(0.855);transform-origin:0 0;">00:00:03:00</div></div>
<div style="position:absolute;left:655px;top:563.5px;width:1px;height:2.0px;background:#48505a;"></div>
<div style="position:absolute;left:662px;top:563.5px;width:1px;height:2.0px;background:#48505a;"></div>
<div style="position:absolute;left:669px;top:561.5px;width:1px;height:4.0px;background:#48505a;"></div>
<div style="position:absolute;left:676px;top:563.5px;width:1px;height:2.0px;background:#48505a;"></div>
<div style="position:absolute;left:683px;top:563.5px;width:1px;height:2.0px;background:#48505a;"></div>
<div style="position:absolute;left:690px;top:561.5px;width:1px;height:4.0px;background:#48505a;"></div>
<div style="position:absolute;left:697px;top:563.5px;width:1px;height:2.0px;background:#48505a;"></div>
<div style="position:absolute;left:704px;top:563.5px;width:1px;height:2.0px;background:#48505a;"></div>
<div style="position:absolute;left:711px;top:561.5px;width:1px;height:4.0px;background:#48505a;"></div>
<div style="position:absolute;left:718px;top:563.5px;width:1px;height:2.0px;background:#48505a;"></div>
<div style="position:absolute;left:725px;top:563.5px;width:1px;height:2.0px;background:#48505a;"></div>
<div style="position:absolute;left:732px;top:561.5px;width:1px;height:4.0px;background:#48505a;"></div>
<div style="position:absolute;left:739px;top:563.5px;width:1px;height:2.0px;background:#48505a;"></div>
<div style="position:absolute;left:746px;top:563.5px;width:1px;height:2.0px;background:#48505a;"></div>
<div style="position:absolute;left:751.75px;top:550.5px;width:1.5px;height:14.5px;background:#4a5058;"></div>
<div style="position:absolute;left:757.5px;top:547.00px;width:62.0px;overflow:hidden;height:13px;"><div style="height:13px;line-height:13px;font:13px 'Liberation Sans', sans-serif;color:#2c3238;white-space:nowrap;transform:scaleX(0.855);transform-origin:0 0;">00:00:04:00</div></div>
<div style="position:absolute;left:759px;top:563.5px;width:1px;height:2.0px;background:#48505a;"></div>
<div style="position:absolute;left:766px;top:563.5px;width:1px;height:2.0px;background:#48505a;"></div>
<div style="position:absolute;left:773px;top:561.5px;width:1px;height:4.0px;background:#48505a;"></div>
<div style="position:absolute;left:780px;top:563.5px;width:1px;height:2.0px;background:#48505a;"></div>
<div style="position:absolute;left:787px;top:563.5px;width:1px;height:2.0px;background:#48505a;"></div>
<div style="position:absolute;left:794px;top:561.5px;width:1px;height:4.0px;background:#48505a;"></div>
<div style="position:absolute;left:801px;top:563.5px;width:1px;height:2.0px;background:#48505a;"></div>
<div style="position:absolute;left:808px;top:563.5px;width:1px;height:2.0px;background:#48505a;"></div>
<div style="position:absolute;left:815px;top:561.5px;width:1px;height:4.0px;background:#48505a;"></div>
<div style="position:absolute;left:822px;top:563.5px;width:1px;height:2.0px;background:#48505a;"></div>
<div style="position:absolute;left:829px;top:563.5px;width:1px;height:2.0px;background:#48505a;"></div>
<div style="position:absolute;left:836px;top:561.5px;width:1px;height:4.0px;background:#48505a;"></div>
<div style="position:absolute;left:843px;top:563.5px;width:1px;height:2.0px;background:#48505a;"></div>
<div style="position:absolute;left:850px;top:563.5px;width:1px;height:2.0px;background:#48505a;"></div>
<div style="position:absolute;left:856.75px;top:550.5px;width:1.5px;height:14.5px;background:#4a5058;"></div>
<div style="position:absolute;left:862.2px;top:547.00px;width:8.8px;overflow:hidden;height:13px;"><div style="height:13px;line-height:13px;font:13px 'Liberation Sans', sans-serif;color:#2c3238;white-space:nowrap;transform:scaleX(0.855);transform-origin:0 0;">00:00:05:00</div></div>
<div style="position:absolute;left:864px;top:563.5px;width:1px;height:2.0px;background:#48505a;"></div>
<svg style="position:absolute;left:506px;top:565px" width="17" height="9"><path d="M1.5 8 L8.5 1 L15.5 8 Z" fill="#ff7a10" stroke="#c05a10" stroke-width="0.6"/></svg>
<svg style="position:absolute;left:859px;top:565px" width="12" height="9"><path d="M1 8 L8.5 1 L15.5 8 Z" fill="#ff7a10" stroke="#c05a10" stroke-width="0.6"/></svg>
<div style="position:absolute;left:333px;top:575px;width:538px;height:20px;background:#6b6b6b;"></div>
<div style="position:absolute;left:333px;top:595px;width:538px;height:2px;background:#3c3c3c;"></div>
<div style="position:absolute;left:333px;top:597px;width:538px;height:20px;background:#6b6b6b;"></div>
<div style="position:absolute;left:333px;top:617px;width:538px;height:2px;background:#3c3c3c;"></div>
<div style="position:absolute;left:333px;top:619px;width:538px;height:20px;background:#6b6b6b;"></div>
<div style="position:absolute;left:333px;top:639px;width:538px;height:2px;background:#3c3c3c;"></div>
<div style="position:absolute;left:333px;top:641px;width:538px;height:20px;background:#6b6b6b;"></div>
<div style="position:absolute;left:333px;top:661px;width:538px;height:2px;background:#3c3c3c;"></div>
<div style="position:absolute;left:333px;top:663px;width:538px;height:20px;background:#6b6b6b;"></div>
<div style="position:absolute;left:333px;top:683px;width:538px;height:2px;background:#3c3c3c;"></div>
<div style="position:absolute;left:333px;top:685px;width:538px;height:20px;background:#6b6b6b;"></div>
<div style="position:absolute;left:333px;top:705px;width:538px;height:2px;background:#3c3c3c;"></div>
<div style="position:absolute;left:333px;top:707px;width:538px;height:20px;background:#6b6b6b;"></div>
<div style="position:absolute;left:333px;top:727px;width:538px;height:2px;background:#3c3c3c;"></div>
<div style="position:absolute;left:333px;top:728px;width:538px;height:11px;background:#2a2a2a;"></div>
<div style="position:absolute;left:333px;top:739px;width:538px;height:1px;background:#111;"></div>
<div style="position:absolute;left:333px;top:740px;width:556px;height:19px;background:#262626;"></div>
<div style="position:absolute;left:871px;top:573px;width:18px;height:167px;background:#2a2a2a;"></div>
<div style="position:absolute;left:874px;top:575px;width:13px;height:15px;box-sizing:border-box;border-radius:3px;background:#6e6e6e;border-top:1px solid #888;"></div>
<svg style="position:absolute;left:874px;top:575px" width="13" height="15"><path d="M3.5 9.5 L6.5 6 L9.5 9.5 Z" fill="#4a4a4a"/></svg>
<div style="position:absolute;left:874px;top:722px;width:13px;height:15px;box-sizing:border-box;border-radius:3px;background:#6e6e6e;border-top:1px solid #888;"></div>
<svg style="position:absolute;left:874px;top:722px" width="13" height="15"><path d="M3.5 6 L6.5 9.5 L9.5 6 Z" fill="#4a4a4a"/></svg>
<div style="position:absolute;left:871px;top:740px;width:18px;height:9px;background:#4a4a4a;"></div>
<div style="position:absolute;left:334px;top:742px;width:16px;height:13px;box-sizing:border-box;border-radius:3px;background:#6e6e6e;border-top:1px solid #888;"></div>
<svg style="position:absolute;left:334px;top:742px" width="16" height="13"><path d="M6 6.5 L9.5 3.5 L9.5 9.5 Z" fill="#4a4a4a"/></svg>
<div style="position:absolute;left:660.5px;top:551px;width:1.6px;height:22px;background:#b82030;"></div>
<div style="position:absolute;left:660.5px;top:575px;width:1.5px;height:165px;background:#40c8b8;"></div>
<svg style="position:absolute;left:642px;top:534px" width="38" height="20"><path d="M3 1.5 L35 1.5 L19 17.5 Z" fill="#3a3a3a" stroke="#fff" stroke-width="2.6" stroke-linejoin="miter"/></svg>
<div style="position:absolute;left:107px;top:778px;width:79px;height:23px;box-sizing:border-box;border-radius:3px;background:#767678;border-top:1px solid #8c8c8e;box-shadow:0 1px 0 1px #242424;"></div>
<div style="position:absolute;left:107px;top:783.84px;width:79px;height:12px;line-height:12px;font:12px 'Liberation Sans', sans-serif;color:#ececec;text-align:center;white-space:nowrap;">Default</div>
<div style="position:absolute;left:722px;top:778px;width:80px;height:23px;box-sizing:border-box;border-radius:3px;background:#767678;border-top:1px solid #8c8c8e;box-shadow:0 1px 0 1px #242424;"></div>
<div style="position:absolute;left:722px;top:783.84px;width:80px;height:12px;line-height:12px;font:12px 'Liberation Sans', sans-serif;color:#ececec;text-align:center;white-space:nowrap;">OK</div>
<div style="position:absolute;left:809px;top:778px;width:80px;height:23px;box-sizing:border-box;border-radius:3px;background:#767678;border-top:1px solid #8c8c8e;box-shadow:0 1px 0 1px #242424;"></div>
<div style="position:absolute;left:809px;top:783.84px;width:80px;height:12px;line-height:12px;font:12px 'Liberation Sans', sans-serif;color:#ececec;text-align:center;white-space:nowrap;">Cancel</div>
<div style="position:absolute;left:819px;top:750px;width:81px;height:41px;background:#000;border-radius:4px 0 0 4px;"></div>
<div style="position:absolute;left:822px;top:792px;width:78px;height:3px;background:#e8b820;"></div>
<div style="position:absolute;left:828.4px;top:742px;width:58.4px;height:58.4px;border-radius:50%;background:conic-gradient(from 0deg,#b0b0b0,#8a8a8a 60deg,#6a6a6a 120deg,#9a9a9a 170deg,#707070 220deg,#d8d8d8 280deg,#f0f0f0 320deg,#b0b0b0 360deg);"></div>
<div style="position:absolute;left:833.1px;top:746.6px;width:49px;height:49px;border-radius:50%;background:radial-gradient(circle,#2a2a34 70%,#1a1a20 80%,#505058 92%,#2a2a2a 100%);"></div>
<div style="position:absolute;left:837.6px;top:751.1px;width:40px;height:40px;border-radius:50%;background:radial-gradient(circle at 50% 50%,#14143a 0,#202060 28%,#4444a0 48%,#34347a 62%,#6a58b0 80%,#3a3a5a 100%);"></div>
<div style="position:absolute;left:845px;top:754px;width:20px;height:11px;border-radius:50%;background:rgba(150,160,230,0.3);"></div>
<div style="position:absolute;left:855px;top:779px;width:17px;height:8px;border-radius:50%;background:rgba(160,120,210,0.35);"></div>
<svg style="position:absolute;left:838.7px;top:766.2px" width="40" height="11"><path d="M0 9.5 L2.2 0 L5.4 0 L9.25 6.2 L13.1 0 L16.3 0 L18.5 9.5 L15.9 9.5 L14.3 2.8 L10.6 9 L7.9 9 L4.2 2.8 L2.6 9.5 Z" fill="#fff"/><path d="M0 9.5 L2.2 0 L5.4 0 L9.25 6.2 L13.1 0 L16.3 0 L18.5 9.5 L15.9 9.5 L14.3 2.8 L10.6 9 L7.9 9 L4.2 2.8 L2.6 9.5 Z" transform="translate(20.2,0)" fill="#fff"/></svg>
<svg style="position:absolute;left:880px;top:798px" width="18" height="17"><path d="M2 16 L16 2 M7 16 L16 7 M12 16 L16 12" stroke="#d8d8d8" stroke-width="1.5"/></svg>
</body></html>
